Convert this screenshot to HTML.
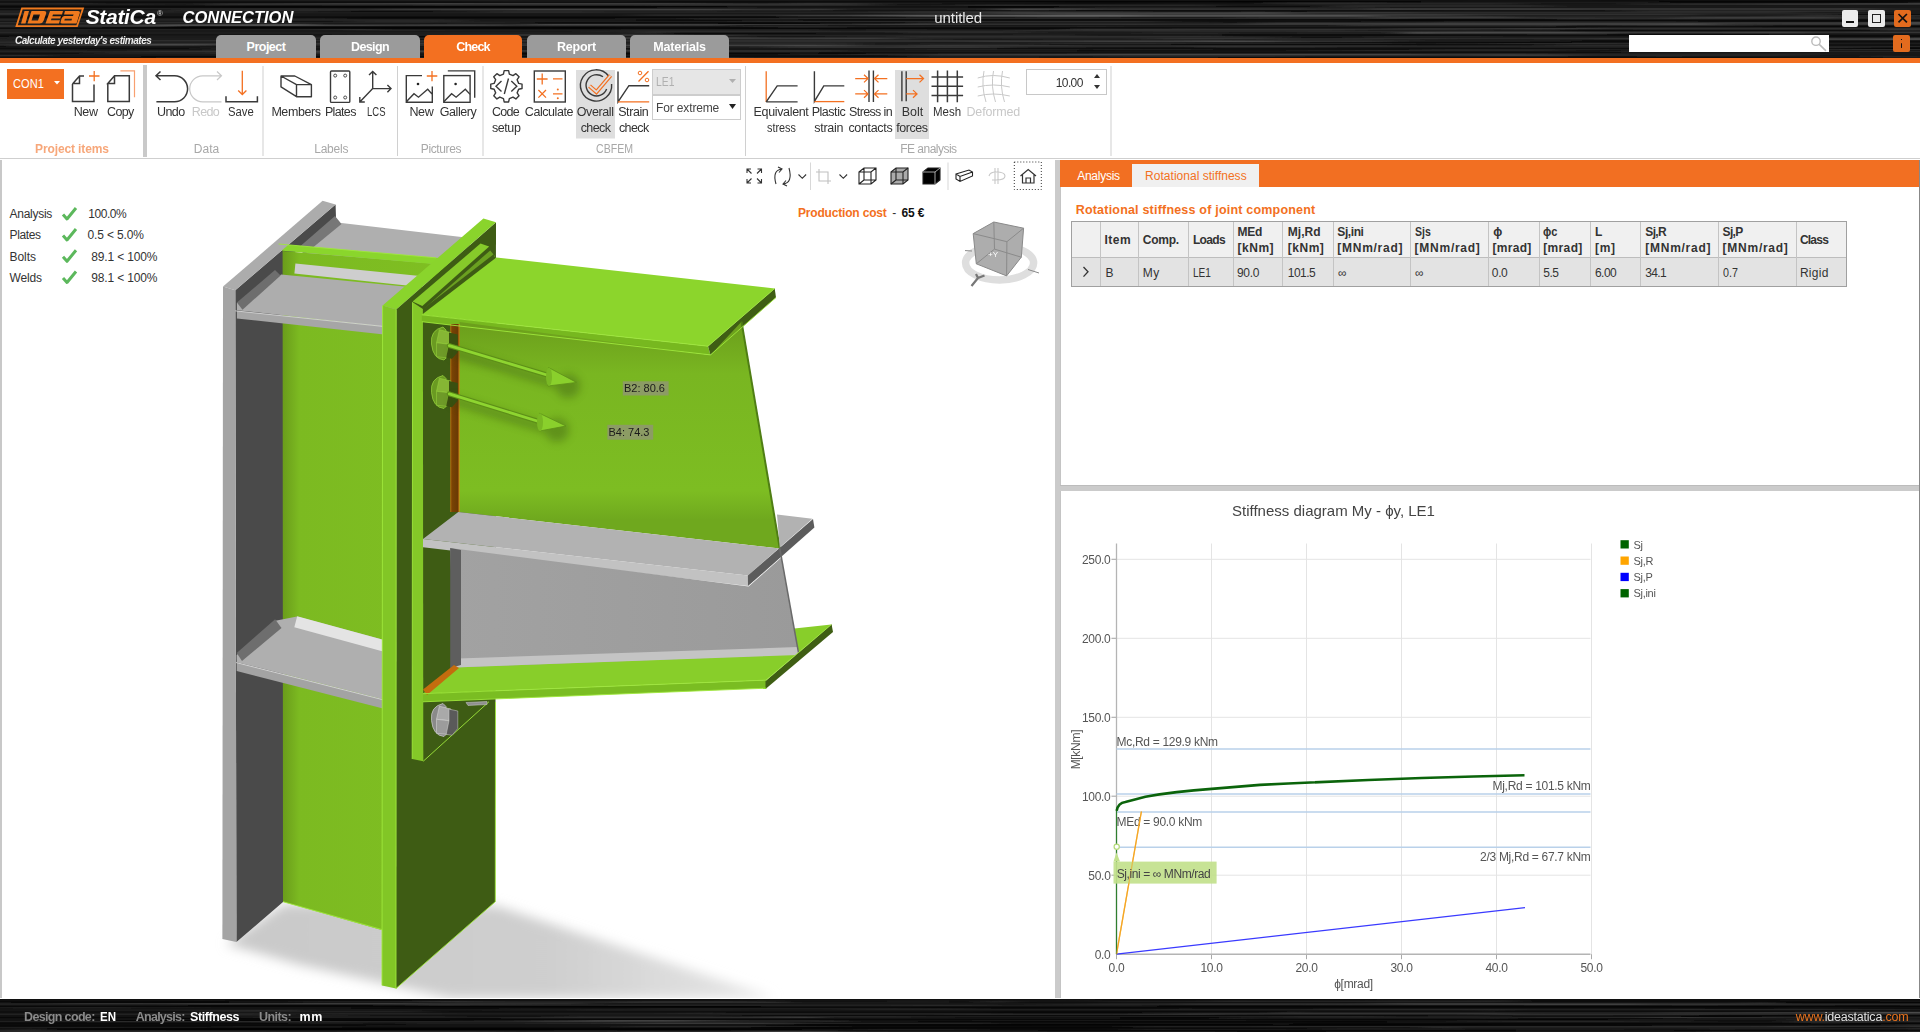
<!DOCTYPE html>
<html><head><meta charset="utf-8">
<style>
*{margin:0;padding:0;box-sizing:border-box}
html,body{width:1920px;height:1032px;overflow:hidden;background:#fff;font-family:"Liberation Sans",sans-serif;position:relative}
.a{position:absolute}
.hdr{left:0;top:0;width:1920px;height:58px;background:#141414;
 background-image:repeating-linear-gradient(180deg,rgba(255,255,255,0.06) 0px,rgba(255,255,255,0) 1px,rgba(0,0,0,0.25) 2px,rgba(255,255,255,0.03) 3px);}
.oline{left:0;top:58px;width:1920px;height:5px;background:#f37021}
.rib{left:0;top:63px;width:1920px;height:96px;background:#fff;border-bottom:1px solid #cfcfcf}
.tab{top:35px;height:23px;border-radius:5px 5px 0 0;background:#9b9b9b;color:#fff;font-weight:bold;font-size:12.5px;text-align:center;line-height:24px}
.ftr{left:0;top:998px;width:1920px;height:34px;background:#0d0d0d;
 background-image:repeating-linear-gradient(180deg,rgba(255,255,255,0.05) 0px,rgba(255,255,255,0) 1px,rgba(0,0,0,0.3) 2px,rgba(255,255,255,0.03) 3px);}
.rl{font-size:12.5px;color:#333;white-space:nowrap}
.gl{font-size:12px;color:#a8a8a8;white-space:nowrap}
.th{font-size:12px;font-weight:bold;color:#333;white-space:nowrap}
.td{font-size:12px;color:#333;white-space:nowrap}
.sep{width:1px;background:#d4d4d4}
</style></head><body>
<!-- HEADER -->
<svg class="a" style="left:0;top:0" width="1920" height="58"><defs><filter id="sf1" filterUnits="userSpaceOnUse" x="-300" y="-10" width="2520" height="78"><feGaussianBlur stdDeviation="16 0.6"/></filter></defs><rect width="1920" height="58" fill="#171717"/><g filter="url(#sf1)"><rect x="-300" y="6" width="2520" height="2" fill="#000" opacity="0.307"/><rect x="-300" y="8" width="2520" height="2" fill="#fff" opacity="0.027"/><rect x="-300" y="10" width="2520" height="2" fill="#000" opacity="0.167"/><rect x="-300" y="12" width="2520" height="2" fill="#fff" opacity="0.011"/><rect x="-300" y="14" width="2520" height="2" fill="#fff" opacity="0.001"/><rect x="-300" y="16" width="2520" height="2" fill="#000" opacity="0.349"/><rect x="-300" y="18" width="2520" height="2" fill="#fff" opacity="0.026"/><rect x="-300" y="22" width="2520" height="2" fill="#fff" opacity="0.003"/><rect x="-300" y="26" width="2520" height="2" fill="#fff" opacity="0.033"/><rect x="-300" y="28" width="2520" height="2" fill="#fff" opacity="0.049"/><rect x="-300" y="30" width="2520" height="2" fill="#fff" opacity="0.038"/><rect x="-300" y="32" width="2520" height="2" fill="#fff" opacity="0.029"/><rect x="-300" y="34" width="2520" height="2" fill="#fff" opacity="0.016"/><rect x="-300" y="36" width="2520" height="2" fill="#000" opacity="0.266"/><rect x="-300" y="40" width="2520" height="2" fill="#fff" opacity="0.022"/><rect x="-300" y="42" width="2520" height="2" fill="#fff" opacity="0.009"/><rect x="-300" y="44" width="2520" height="2" fill="#000" opacity="0.213"/><rect x="-300" y="48" width="2520" height="2" fill="#000" opacity="0.140"/><rect x="-300" y="50" width="2520" height="2" fill="#000" opacity="0.114"/><rect x="-300" y="52" width="2520" height="2" fill="#000" opacity="0.300"/><rect x="-300" y="56" width="2520" height="2" fill="#000" opacity="0.229"/><rect x="377" y="16.4" width="733" height="2" fill="#fff" opacity="0.037"/><rect x="1076" y="8.5" width="240" height="1.5" fill="#fff" opacity="0.039"/><rect x="1740" y="31.1" width="595" height="1.5" fill="#fff" opacity="0.033"/><rect x="-176" y="55.6" width="462" height="1" fill="#fff" opacity="0.033"/><rect x="-272" y="12.9" width="317" height="2" fill="#fff" opacity="0.096"/><rect x="1894" y="30.7" width="712" height="1.5" fill="#fff" opacity="0.021"/><rect x="789" y="44.9" width="178" height="1.5" fill="#fff" opacity="0.057"/><rect x="1773" y="11.2" width="863" height="1" fill="#fff" opacity="0.027"/><rect x="1142" y="31.7" width="668" height="2" fill="#fff" opacity="0.085"/><rect x="636" y="14.4" width="826" height="1.5" fill="#fff" opacity="0.081"/><rect x="620" y="37.4" width="274" height="2" fill="#fff" opacity="0.075"/><rect x="1239" y="23.5" width="772" height="2" fill="#fff" opacity="0.080"/><rect x="644" y="31.1" width="374" height="2" fill="#fff" opacity="0.069"/><rect x="332" y="2.9" width="169" height="1" fill="#fff" opacity="0.047"/><rect x="1554" y="31.9" width="336" height="2" fill="#fff" opacity="0.026"/><rect x="903" y="32.0" width="326" height="2" fill="#fff" opacity="0.097"/><rect x="1894" y="45.6" width="354" height="1.5" fill="#fff" opacity="0.050"/><rect x="15" y="44.8" width="801" height="1" fill="#fff" opacity="0.083"/><rect x="1153" y="1.7" width="709" height="1" fill="#fff" opacity="0.054"/><rect x="1026" y="15.8" width="894" height="2" fill="#fff" opacity="0.064"/><rect x="361" y="30.0" width="824" height="1" fill="#fff" opacity="0.038"/><rect x="1676" y="3.5" width="433" height="1" fill="#fff" opacity="0.074"/><rect x="347" y="34.5" width="390" height="1.5" fill="#fff" opacity="0.084"/><rect x="1765" y="15.6" width="270" height="1" fill="#fff" opacity="0.054"/><rect x="761" y="46.5" width="565" height="1.5" fill="#fff" opacity="0.063"/><rect x="553" y="39.4" width="820" height="1" fill="#fff" opacity="0.060"/><rect x="727" y="6.3" width="241" height="2" fill="#fff" opacity="0.082"/><rect x="-218" y="0.4" width="737" height="1" fill="#fff" opacity="0.040"/><rect x="1108" y="56.0" width="182" height="1" fill="#fff" opacity="0.042"/><rect x="25" y="20.6" width="778" height="1" fill="#fff" opacity="0.034"/><rect x="1056" y="29.0" width="421" height="1" fill="#fff" opacity="0.070"/><rect x="1043" y="39.7" width="181" height="1" fill="#fff" opacity="0.093"/><rect x="-258" y="10.4" width="608" height="1" fill="#fff" opacity="0.095"/><rect x="1691" y="16.8" width="371" height="1" fill="#fff" opacity="0.086"/><rect x="1013" y="34.4" width="395" height="1" fill="#fff" opacity="0.048"/><rect x="176" y="9.1" width="875" height="1.5" fill="#fff" opacity="0.081"/><rect x="1003" y="12.7" width="854" height="2" fill="#fff" opacity="0.049"/><rect x="1353" y="37.1" width="844" height="1.5" fill="#fff" opacity="0.057"/><rect x="1822" y="37.6" width="629" height="1.5" fill="#fff" opacity="0.050"/><rect x="1545" y="44.1" width="180" height="1.5" fill="#fff" opacity="0.048"/><rect x="1145" y="12.0" width="271" height="1.5" fill="#fff" opacity="0.053"/><rect x="401" y="3.3" width="471" height="1" fill="#fff" opacity="0.067"/><rect x="246" y="23.6" width="386" height="2" fill="#fff" opacity="0.044"/><rect x="585" y="46.7" width="426" height="1.5" fill="#fff" opacity="0.097"/><rect x="1083" y="30.6" width="471" height="2" fill="#fff" opacity="0.035"/><rect x="122" y="25.1" width="730" height="1" fill="#fff" opacity="0.057"/><rect x="1114" y="0.2" width="341" height="2" fill="#fff" opacity="0.023"/><rect x="1864" y="22.3" width="705" height="2" fill="#fff" opacity="0.098"/><rect x="1297" y="49.8" width="258" height="1" fill="#fff" opacity="0.080"/><rect x="730" y="46.3" width="713" height="1" fill="#fff" opacity="0.054"/><rect x="1873" y="39.1" width="749" height="1" fill="#fff" opacity="0.070"/><rect x="1046" y="42.8" width="549" height="1" fill="#fff" opacity="0.088"/><rect x="393" y="44.6" width="678" height="1.5" fill="#fff" opacity="0.059"/><rect x="1455" y="31.1" width="371" height="2" fill="#fff" opacity="0.022"/><rect x="965" y="45.1" width="826" height="1" fill="#fff" opacity="0.025"/><rect x="10" y="44.5" width="845" height="2" fill="#fff" opacity="0.094"/><rect x="-54" y="55.3" width="770" height="1" fill="#fff" opacity="0.086"/><rect x="-225" y="54.8" width="508" height="2" fill="#fff" opacity="0.023"/><rect x="909" y="15.1" width="466" height="2" fill="#fff" opacity="0.072"/><rect x="138" y="49.9" width="701" height="2" fill="#fff" opacity="0.074"/><rect x="-8" y="37.4" width="777" height="1.5" fill="#fff" opacity="0.025"/><rect x="16" y="37.8" width="882" height="1" fill="#fff" opacity="0.068"/><rect x="-199" y="22.0" width="719" height="1.5" fill="#fff" opacity="0.084"/><rect x="9" y="36.3" width="748" height="1.5" fill="#fff" opacity="0.072"/><rect x="938" y="53.6" width="882" height="1" fill="#fff" opacity="0.088"/><rect x="424" y="4.7" width="653" height="2" fill="#fff" opacity="0.023"/><rect x="382" y="9.5" width="781" height="1" fill="#fff" opacity="0.031"/><rect x="995" y="8.0" width="882" height="2" fill="#fff" opacity="0.087"/><rect x="137" y="42.9" width="278" height="2" fill="#fff" opacity="0.063"/><rect x="1769" y="33.8" width="750" height="1" fill="#fff" opacity="0.041"/><rect x="1527" y="34.2" width="689" height="1" fill="#fff" opacity="0.029"/><rect x="-157" y="24.5" width="658" height="1.5" fill="#fff" opacity="0.099"/><rect x="-80" y="43.8" width="336" height="1.5" fill="#fff" opacity="0.070"/><rect x="182" y="24.2" width="569" height="1" fill="#fff" opacity="0.047"/><rect x="1860" y="32.1" width="222" height="1" fill="#fff" opacity="0.079"/><rect x="947" y="8.7" width="628" height="1" fill="#fff" opacity="0.056"/><rect x="1760" y="3.0" width="349" height="2" fill="#fff" opacity="0.036"/><rect x="1195" y="40.2" width="376" height="1.5" fill="#fff" opacity="0.093"/><rect x="-68" y="45.0" width="549" height="1.5" fill="#fff" opacity="0.050"/><rect x="87" y="41.8" width="810" height="1" fill="#fff" opacity="0.022"/><rect x="1427" y="48.9" width="670" height="1" fill="#fff" opacity="0.088"/><rect x="1152" y="38.1" width="787" height="1.5" fill="#fff" opacity="0.096"/><rect x="1754" y="36.1" width="258" height="1.5" fill="#fff" opacity="0.030"/><rect x="906" y="15.6" width="598" height="2" fill="#fff" opacity="0.066"/><rect x="836" y="36.0" width="656" height="1" fill="#fff" opacity="0.068"/><rect x="453" y="22.9" width="265" height="1" fill="#fff" opacity="0.091"/><rect x="918" y="44.8" width="810" height="1.5" fill="#fff" opacity="0.048"/><rect x="1433" y="52.8" width="649" height="1" fill="#fff" opacity="0.042"/><rect x="1054" y="6.6" width="321" height="1.5" fill="#fff" opacity="0.054"/><rect x="246" y="50.5" width="220" height="2" fill="#fff" opacity="0.062"/><rect x="1798" y="14.9" width="301" height="1" fill="#fff" opacity="0.075"/><rect x="1883" y="55.9" width="261" height="2" fill="#fff" opacity="0.046"/><rect x="606" y="44.0" width="428" height="1" fill="#fff" opacity="0.067"/><rect x="-186" y="48.4" width="431" height="1.5" fill="#fff" opacity="0.067"/><rect x="-156" y="41.9" width="246" height="1" fill="#fff" opacity="0.029"/><rect x="1622" y="24.8" width="416" height="1" fill="#fff" opacity="0.092"/><rect x="354" y="20.7" width="801" height="1.5" fill="#fff" opacity="0.093"/><rect x="156" y="57.0" width="574" height="1.5" fill="#fff" opacity="0.092"/><rect x="327" y="42.5" width="528" height="2" fill="#fff" opacity="0.083"/><rect x="1572" y="41.6" width="768" height="2" fill="#fff" opacity="0.052"/><rect x="-20" y="37.2" width="160" height="1.5" fill="#fff" opacity="0.093"/><rect x="675" y="48.4" width="322" height="1" fill="#fff" opacity="0.073"/><rect x="-216" y="10.9" width="809" height="2" fill="#fff" opacity="0.036"/><rect x="779" y="17.6" width="816" height="1" fill="#fff" opacity="0.085"/><rect x="860" y="14.6" width="279" height="2" fill="#fff" opacity="0.099"/><rect x="146" y="24.0" width="682" height="1.5" fill="#fff" opacity="0.098"/><rect x="-32" y="49.5" width="702" height="1.5" fill="#fff" opacity="0.034"/><rect x="200" y="47.4" width="330" height="2" fill="#fff" opacity="0.075"/><rect x="621" y="29.3" width="873" height="1.5" fill="#fff" opacity="0.035"/><rect x="-207" y="52.0" width="555" height="1" fill="#fff" opacity="0.026"/><rect x="102" y="1.1" width="179" height="2" fill="#fff" opacity="0.022"/><rect x="424" y="23.4" width="513" height="2" fill="#fff" opacity="0.081"/><rect x="197" y="50.5" width="195" height="1" fill="#fff" opacity="0.020"/><rect x="-59" y="3.4" width="899" height="1" fill="#fff" opacity="0.088"/><rect x="677" y="39.6" width="350" height="1.5" fill="#fff" opacity="0.061"/><rect x="-198" y="46.2" width="184" height="2" fill="#fff" opacity="0.034"/><rect x="1527" y="18.3" width="507" height="1" fill="#fff" opacity="0.066"/><rect x="1050" y="13.8" width="647" height="1.5" fill="#fff" opacity="0.080"/><rect x="918" y="54.5" width="650" height="2" fill="#fff" opacity="0.088"/><rect x="782" y="46.7" width="216" height="1.5" fill="#fff" opacity="0.087"/><rect x="399" y="40.0" width="881" height="2" fill="#fff" opacity="0.080"/><rect x="1374" y="16.7" width="466" height="2" fill="#fff" opacity="0.092"/><rect x="1631" y="3.1" width="448" height="2" fill="#fff" opacity="0.050"/><rect x="1771" y="23.2" width="585" height="2" fill="#fff" opacity="0.033"/><rect x="1241" y="11.5" width="556" height="1.5" fill="#fff" opacity="0.065"/><rect x="292" y="3.0" width="441" height="1" fill="#fff" opacity="0.062"/><rect x="202" y="49.4" width="406" height="1" fill="#fff" opacity="0.063"/><rect x="1267" y="21.9" width="884" height="2" fill="#fff" opacity="0.041"/><rect x="456" y="9.4" width="795" height="2" fill="#fff" opacity="0.033"/><rect x="1341" y="51.4" width="868" height="1.5" fill="#fff" opacity="0.033"/><rect x="-246" y="41.5" width="294" height="2" fill="#fff" opacity="0.054"/><rect x="1723" y="32.5" width="260" height="1" fill="#fff" opacity="0.066"/><rect x="1297" y="31.7" width="291" height="2" fill="#fff" opacity="0.085"/><rect x="903" y="25.7" width="206" height="1.5" fill="#fff" opacity="0.048"/><rect x="938" y="45.3" width="464" height="1" fill="#fff" opacity="0.081"/><rect x="1834" y="48.8" width="660" height="1.5" fill="#fff" opacity="0.090"/><rect x="485" y="11.1" width="653" height="1.5" fill="#fff" opacity="0.091"/><rect x="145" y="35.4" width="274" height="1" fill="#fff" opacity="0.097"/><rect x="1840" y="2.9" width="209" height="1" fill="#fff" opacity="0.065"/><rect x="869" y="11.1" width="408" height="1.5" fill="#fff" opacity="0.068"/><rect x="511" y="6.6" width="247" height="1" fill="#fff" opacity="0.095"/><rect x="380" y="8.6" width="354" height="1.5" fill="#fff" opacity="0.077"/><rect x="225" y="51.8" width="594" height="2" fill="#fff" opacity="0.055"/><rect x="816" y="32.6" width="602" height="1" fill="#fff" opacity="0.074"/><rect x="1084" y="40.7" width="446" height="1.5" fill="#fff" opacity="0.045"/><rect x="571" y="49.4" width="506" height="2" fill="#fff" opacity="0.075"/><rect x="1333" y="5.2" width="216" height="1.5" fill="#fff" opacity="0.089"/><rect x="1634" y="10.5" width="246" height="1.5" fill="#fff" opacity="0.078"/><rect x="1717" y="22.2" width="577" height="2" fill="#fff" opacity="0.048"/><rect x="1255" y="21.8" width="721" height="2" fill="#fff" opacity="0.051"/><rect x="1817" y="36.8" width="439" height="1" fill="#fff" opacity="0.029"/><rect x="14" y="42.6" width="415" height="1" fill="#fff" opacity="0.051"/><rect x="852" y="23.4" width="874" height="2" fill="#fff" opacity="0.100"/><rect x="1489" y="42.8" width="678" height="1" fill="#fff" opacity="0.057"/><rect x="955" y="4.6" width="261" height="2" fill="#fff" opacity="0.067"/><rect x="1361" y="20.6" width="326" height="1.5" fill="#fff" opacity="0.088"/><rect x="1503" y="28.3" width="462" height="1.5" fill="#fff" opacity="0.079"/><rect x="1179" y="49.5" width="421" height="1" fill="#fff" opacity="0.026"/><rect x="1665" y="23.5" width="662" height="1.5" fill="#fff" opacity="0.064"/><rect x="1283" y="2.5" width="235" height="2" fill="#fff" opacity="0.077"/><rect x="1421" y="1.0" width="238" height="2" fill="#fff" opacity="0.078"/><rect x="984" y="11.9" width="297" height="2" fill="#fff" opacity="0.063"/><rect x="1652" y="55.8" width="244" height="1" fill="#fff" opacity="0.087"/><rect x="1008" y="21.3" width="325" height="1.5" fill="#fff" opacity="0.021"/><rect x="1482" y="54.8" width="317" height="1" fill="#fff" opacity="0.072"/><rect x="866" y="29.4" width="484" height="2" fill="#fff" opacity="0.072"/><rect x="813" y="37.7" width="451" height="1.5" fill="#fff" opacity="0.044"/><rect x="1542" y="38.7" width="405" height="2" fill="#fff" opacity="0.024"/><rect x="498" y="2.8" width="433" height="1.5" fill="#fff" opacity="0.037"/><rect x="102" y="8.1" width="228" height="2" fill="#fff" opacity="0.041"/><rect x="1395" y="28.0" width="196" height="1" fill="#fff" opacity="0.086"/><rect x="787" y="15.0" width="586" height="1.5" fill="#fff" opacity="0.098"/><rect x="1532" y="38.7" width="782" height="1" fill="#fff" opacity="0.075"/><rect x="920" y="43.2" width="487" height="2" fill="#fff" opacity="0.026"/><rect x="1078" y="53.5" width="459" height="1" fill="#fff" opacity="0.063"/><rect x="109" y="26.2" width="738" height="1" fill="#fff" opacity="0.077"/><rect x="-286" y="26.8" width="388" height="1" fill="#fff" opacity="0.059"/><rect x="1883" y="20.3" width="701" height="1" fill="#fff" opacity="0.043"/><rect x="901" y="13.2" width="399" height="1" fill="#fff" opacity="0.079"/><rect x="212" y="3.6" width="659" height="2" fill="#fff" opacity="0.098"/><rect x="1594" y="38.2" width="450" height="2" fill="#fff" opacity="0.056"/><rect x="211" y="2.6" width="888" height="1" fill="#fff" opacity="0.047"/><rect x="430" y="56.8" width="788" height="1.5" fill="#fff" opacity="0.045"/><rect x="-233" y="50.8" width="758" height="1.5" fill="#fff" opacity="0.068"/><rect x="974" y="41.0" width="336" height="1.5" fill="#fff" opacity="0.040"/><rect x="1446" y="45.7" width="455" height="1.5" fill="#fff" opacity="0.039"/><rect x="318" y="28.9" width="609" height="1" fill="#fff" opacity="0.046"/><rect x="615" y="18.3" width="325" height="1" fill="#fff" opacity="0.037"/><rect x="1520" y="46.8" width="813" height="1" fill="#fff" opacity="0.059"/><rect x="1609" y="9.6" width="599" height="1.5" fill="#fff" opacity="0.029"/><rect x="69" y="39.4" width="292" height="1.5" fill="#fff" opacity="0.085"/><rect x="1621" y="50.4" width="427" height="2" fill="#fff" opacity="0.066"/><rect x="1386" y="23.5" width="516" height="1.5" fill="#fff" opacity="0.045"/><rect x="-149" y="32.0" width="194" height="1" fill="#fff" opacity="0.049"/><rect x="1888" y="21.3" width="692" height="1" fill="#fff" opacity="0.093"/><rect x="705" y="42.8" width="698" height="1.5" fill="#fff" opacity="0.042"/><rect x="1023" y="53.8" width="563" height="2" fill="#fff" opacity="0.027"/><rect x="76" y="24.5" width="363" height="1" fill="#fff" opacity="0.033"/><rect x="473" y="33.9" width="602" height="2" fill="#fff" opacity="0.060"/><rect x="580" y="36.3" width="701" height="2" fill="#fff" opacity="0.086"/><rect x="916" y="48.9" width="286" height="1" fill="#fff" opacity="0.085"/><rect x="322" y="5.5" width="490" height="1" fill="#fff" opacity="0.033"/><rect x="-296" y="26.3" width="450" height="1" fill="#fff" opacity="0.075"/><rect x="226" y="2.9" width="237" height="1.5" fill="#fff" opacity="0.029"/><rect x="1347" y="0.9" width="591" height="2" fill="#fff" opacity="0.032"/><rect x="1584" y="42.2" width="890" height="2" fill="#fff" opacity="0.041"/><rect x="789" y="53.7" width="629" height="1" fill="#fff" opacity="0.097"/><rect x="-160" y="50.0" width="247" height="2" fill="#fff" opacity="0.042"/><rect x="63" y="43.8" width="389" height="1.5" fill="#fff" opacity="0.067"/><rect x="-122" y="38.7" width="157" height="2" fill="#fff" opacity="0.043"/><rect x="1119" y="7.6" width="165" height="1" fill="#fff" opacity="0.029"/><rect x="-43" y="19.3" width="502" height="1.5" fill="#fff" opacity="0.072"/><rect x="1373" y="35.4" width="390" height="1.5" fill="#fff" opacity="0.049"/><rect x="3" y="40.8" width="309" height="1" fill="#fff" opacity="0.048"/><rect x="153" y="24.8" width="224" height="1.5" fill="#fff" opacity="0.070"/><rect x="886" y="46.3" width="633" height="1.5" fill="#fff" opacity="0.049"/><rect x="1324" y="6.2" width="668" height="1.5" fill="#fff" opacity="0.045"/><rect x="1267" y="38.9" width="273" height="1.5" fill="#fff" opacity="0.049"/><rect x="-272" y="36.7" width="676" height="2" fill="#fff" opacity="0.050"/><rect x="94" y="52.6" width="283" height="2" fill="#fff" opacity="0.070"/><rect x="718" y="27.1" width="197" height="2" fill="#000" opacity="0.193"/><rect x="1762" y="25.2" width="522" height="2" fill="#000" opacity="0.417"/><rect x="-106" y="17.3" width="736" height="1" fill="#000" opacity="0.135"/><rect x="1403" y="40.6" width="590" height="1" fill="#000" opacity="0.351"/><rect x="1222" y="34.6" width="850" height="2" fill="#000" opacity="0.384"/><rect x="421" y="35.0" width="174" height="1" fill="#000" opacity="0.125"/><rect x="-19" y="48.2" width="372" height="2" fill="#000" opacity="0.313"/><rect x="36" y="55.0" width="732" height="1" fill="#000" opacity="0.141"/><rect x="1423" y="39.8" width="231" height="1" fill="#000" opacity="0.169"/><rect x="820" y="38.6" width="182" height="1" fill="#000" opacity="0.106"/><rect x="1487" y="42.3" width="438" height="1" fill="#000" opacity="0.379"/><rect x="1134" y="47.7" width="634" height="2" fill="#000" opacity="0.189"/><rect x="80" y="1.8" width="711" height="2" fill="#000" opacity="0.273"/><rect x="-244" y="27.0" width="845" height="2" fill="#000" opacity="0.432"/><rect x="842" y="49.3" width="518" height="2" fill="#000" opacity="0.152"/><rect x="1086" y="47.1" width="399" height="1" fill="#000" opacity="0.215"/><rect x="1607" y="33.4" width="768" height="2" fill="#000" opacity="0.415"/><rect x="601" y="43.5" width="836" height="1" fill="#000" opacity="0.432"/><rect x="-294" y="1.5" width="780" height="1" fill="#000" opacity="0.344"/><rect x="1052" y="1.5" width="215" height="2" fill="#000" opacity="0.401"/><rect x="914" y="26.5" width="673" height="2" fill="#000" opacity="0.274"/><rect x="853" y="0.3" width="811" height="1" fill="#000" opacity="0.127"/><rect x="221" y="5.9" width="874" height="2" fill="#000" opacity="0.437"/><rect x="992" y="0.9" width="507" height="1" fill="#000" opacity="0.285"/><rect x="964" y="9.6" width="204" height="1" fill="#000" opacity="0.139"/><rect x="1376" y="2.2" width="529" height="1" fill="#000" opacity="0.402"/><rect x="1039" y="56.8" width="734" height="2" fill="#000" opacity="0.302"/><rect x="651" y="31.8" width="766" height="2" fill="#000" opacity="0.403"/><rect x="72" y="5.6" width="585" height="2" fill="#000" opacity="0.370"/><rect x="-295" y="37.7" width="749" height="1" fill="#000" opacity="0.144"/><rect x="185" y="11.2" width="248" height="1" fill="#000" opacity="0.213"/><rect x="363" y="28.0" width="707" height="2" fill="#000" opacity="0.340"/><rect x="1860" y="47.0" width="680" height="2" fill="#000" opacity="0.342"/><rect x="557" y="19.8" width="871" height="1" fill="#000" opacity="0.145"/><rect x="636" y="19.3" width="621" height="2" fill="#000" opacity="0.217"/><rect x="616" y="39.8" width="828" height="1" fill="#000" opacity="0.304"/><rect x="1376" y="41.0" width="443" height="2" fill="#000" opacity="0.284"/><rect x="620" y="48.9" width="488" height="2" fill="#000" opacity="0.262"/><rect x="720" y="25.5" width="367" height="2" fill="#000" opacity="0.123"/><rect x="-106" y="8.9" width="429" height="1" fill="#000" opacity="0.240"/><rect x="1228" y="52.0" width="848" height="1" fill="#000" opacity="0.128"/><rect x="1834" y="0.1" width="406" height="1" fill="#000" opacity="0.445"/><rect x="430" y="29.9" width="593" height="1" fill="#000" opacity="0.250"/><rect x="-257" y="5.4" width="317" height="2" fill="#000" opacity="0.411"/><rect x="1620" y="49.1" width="491" height="2" fill="#000" opacity="0.276"/><rect x="141" y="56.4" width="295" height="2" fill="#000" opacity="0.268"/><rect x="970" y="1.1" width="198" height="2" fill="#000" opacity="0.121"/><rect x="717" y="10.5" width="720" height="1" fill="#000" opacity="0.368"/><rect x="667" y="46.6" width="538" height="2" fill="#000" opacity="0.397"/><rect x="1232" y="0.7" width="690" height="2" fill="#000" opacity="0.401"/><rect x="-180" y="45.4" width="761" height="2" fill="#000" opacity="0.391"/><rect x="1395" y="18.4" width="162" height="2" fill="#000" opacity="0.313"/><rect x="1823" y="14.1" width="156" height="1" fill="#000" opacity="0.448"/><rect x="1697" y="23.1" width="564" height="2" fill="#000" opacity="0.209"/><rect x="942" y="38.7" width="708" height="1" fill="#000" opacity="0.297"/><rect x="352" y="17.2" width="889" height="1" fill="#000" opacity="0.350"/><rect x="1242" y="19.3" width="285" height="1" fill="#000" opacity="0.274"/><rect x="430" y="22.8" width="391" height="1" fill="#000" opacity="0.427"/><rect x="1074" y="8.1" width="309" height="2" fill="#000" opacity="0.249"/><rect x="74" y="26.6" width="704" height="2" fill="#000" opacity="0.133"/><rect x="714" y="25.0" width="643" height="1" fill="#000" opacity="0.334"/><rect x="819" y="29.3" width="814" height="2" fill="#000" opacity="0.240"/><rect x="1171" y="42.6" width="331" height="2" fill="#000" opacity="0.202"/><rect x="32" y="55.0" width="860" height="2" fill="#000" opacity="0.246"/><rect x="-175" y="50.7" width="253" height="1" fill="#000" opacity="0.242"/><rect x="142" y="4.1" width="851" height="1" fill="#000" opacity="0.113"/><rect x="-44" y="48.5" width="873" height="1" fill="#000" opacity="0.276"/><rect x="1196" y="47.6" width="497" height="1" fill="#000" opacity="0.173"/><rect x="664" y="33.2" width="750" height="2" fill="#000" opacity="0.312"/><rect x="259" y="48.0" width="283" height="2" fill="#000" opacity="0.180"/><rect x="538" y="22.2" width="385" height="2" fill="#000" opacity="0.303"/><rect x="798" y="19.0" width="721" height="1" fill="#000" opacity="0.265"/><rect x="168" y="25.9" width="580" height="2" fill="#000" opacity="0.422"/><rect x="-126" y="9.3" width="643" height="1" fill="#000" opacity="0.119"/><rect x="1361" y="19.7" width="743" height="2" fill="#000" opacity="0.311"/><rect x="1204" y="20.5" width="240" height="2" fill="#000" opacity="0.255"/><rect x="-161" y="36.4" width="741" height="2" fill="#000" opacity="0.132"/><rect x="1438" y="38.6" width="353" height="2" fill="#000" opacity="0.207"/><rect x="1845" y="19.6" width="254" height="1" fill="#000" opacity="0.324"/><rect x="1556" y="25.2" width="413" height="2" fill="#000" opacity="0.339"/><rect x="74" y="53.8" width="601" height="1" fill="#000" opacity="0.162"/><rect x="822" y="8.8" width="189" height="2" fill="#000" opacity="0.392"/><rect x="-47" y="50.2" width="567" height="1" fill="#000" opacity="0.258"/><rect x="1045" y="10.5" width="264" height="2" fill="#000" opacity="0.131"/><rect x="1598" y="0.1" width="403" height="2" fill="#000" opacity="0.258"/><rect x="477" y="52.5" width="389" height="2" fill="#000" opacity="0.442"/><rect x="336" y="17.3" width="358" height="2" fill="#000" opacity="0.285"/><rect x="1057" y="31.9" width="345" height="1" fill="#000" opacity="0.324"/><rect x="-8" y="55.9" width="533" height="2" fill="#000" opacity="0.156"/><rect x="246" y="21.1" width="558" height="2" fill="#000" opacity="0.193"/><rect x="159" y="26.4" width="457" height="2" fill="#000" opacity="0.411"/><rect x="456" y="20.6" width="286" height="1" fill="#000" opacity="0.424"/><rect x="693" y="2.6" width="450" height="1" fill="#000" opacity="0.309"/><rect x="687" y="23.4" width="193" height="1" fill="#000" opacity="0.185"/><rect x="-4" y="39.0" width="460" height="1" fill="#000" opacity="0.165"/><rect x="542" y="6.1" width="793" height="1" fill="#000" opacity="0.248"/><rect x="1834" y="47.8" width="627" height="1" fill="#000" opacity="0.403"/><rect x="940" y="45.1" width="620" height="1" fill="#000" opacity="0.128"/><rect x="1673" y="55.8" width="205" height="1" fill="#000" opacity="0.313"/><rect x="1560" y="29.2" width="331" height="2" fill="#000" opacity="0.380"/><rect x="641" y="1.0" width="662" height="1" fill="#000" opacity="0.419"/><rect x="560" y="27.7" width="612" height="1" fill="#000" opacity="0.391"/><rect x="1022" y="1.0" width="861" height="1" fill="#000" opacity="0.332"/><rect x="-297" y="37.0" width="542" height="2" fill="#000" opacity="0.254"/><rect x="1385" y="19.6" width="488" height="2" fill="#000" opacity="0.305"/><rect x="422" y="41.5" width="237" height="1" fill="#000" opacity="0.174"/><rect x="1525" y="17.5" width="153" height="1" fill="#000" opacity="0.346"/><rect x="1707" y="41.7" width="681" height="2" fill="#000" opacity="0.407"/><rect x="206" y="44.1" width="281" height="2" fill="#000" opacity="0.307"/><rect x="1264" y="41.3" width="771" height="2" fill="#000" opacity="0.124"/><rect x="1759" y="36.9" width="150" height="2" fill="#000" opacity="0.216"/><rect x="1890" y="30.9" width="701" height="1" fill="#000" opacity="0.140"/><rect x="328" y="36.3" width="579" height="1" fill="#000" opacity="0.405"/><rect x="-126" y="19.7" width="613" height="1" fill="#000" opacity="0.120"/><rect x="1146" y="24.0" width="721" height="1" fill="#000" opacity="0.113"/><rect x="319" y="11.2" width="585" height="1" fill="#000" opacity="0.215"/><rect x="-196" y="34.7" width="653" height="2" fill="#000" opacity="0.372"/><rect x="1756" y="18.6" width="152" height="2" fill="#000" opacity="0.121"/><rect x="300" y="23.4" width="244" height="2" fill="#000" opacity="0.384"/><rect x="64" y="30.5" width="532" height="1" fill="#000" opacity="0.217"/></g></svg>
<div id="t2" class="a oline"></div>
<div id="t3" class="a tab" style="left:216.0px;width:100px;letter-spacing:-0.50px">Project</div>
<div id="t4" class="a tab" style="left:320.0px;width:100px;letter-spacing:-0.62px">Design</div>
<div id="t5" class="a tab" style="left:424.0px;width:98px;background:#f37021;letter-spacing:-0.80px">Check</div>
<div id="t6" class="a tab" style="left:527.0px;width:99px;letter-spacing:-0.24px">Report</div>
<div id="t7" class="a tab" style="left:630.0px;width:99px;letter-spacing:-0.18px">Materials</div>


<!-- HEADER CONTENT -->
<svg class="a" style="left:0;top:0" width="320" height="56" viewBox="0 0 320 56">
 <polygon points="22,8.5 83,8.5 77,26.2 16.5,26.2" fill="none" stroke="#f07a1e" stroke-width="1.8"/>
 <polygon points="24.5,11 29,11 25.5,23.5 21,23.5" fill="#f07a1e"/>
 <path d="M31.5,11 L44,11 Q47,11 46,14 L43.5,21 Q42.5,23.5 39.5,23.5 L27.5,23.5 Z M33.5,14.5 L31.5,20.5 L38,20.5 L40,14.5 Z" fill="#f07a1e" fill-rule="evenodd"/>
 <path d="M50,11 L63,11 L62,14.5 L53,14.5 L52.3,16.3 L61,16.3 L60.2,18.5 L51.5,18.5 L50.9,20.3 L60,20.3 L58.9,23.5 L45.5,23.5 Z" fill="#f07a1e"/>
 <path d="M65,11 L78,11 Q80.5,11 79.7,13.5 L76.5,23.5 L62,23.5 Q60,23.5 60.8,21 L61.8,18 Q62.6,16 64.5,16 L73,16 L73.6,14.5 L64,14.5 Z M64.8,18.8 L64.3,20.5 L71.5,20.5 L72,18.8 Z" fill="#f07a1e" fill-rule="evenodd"/>
</svg>
<div id="t8" class="a" style="left:85.7px;top:5px;font-size:21px;font-weight:bold;font-style:italic;color:#fff;letter-spacing:-0.33px">StatiCa</div>
<div id="t9" class="a" style="left:157px;top:9px;font-size:8px;color:#ddd">&#174;</div>
<div id="t10" class="a" style="left:182.5px;top:7.5px;font-size:16.5px;font-weight:bold;font-style:italic;color:#fff;letter-spacing:-0.01px">CONNECTION</div>
<div id="t11" class="a" style="left:14.9px;top:35px;font-size:10px;font-weight:bold;font-style:italic;color:#eee;letter-spacing:-0.46px">Calculate yesterday's estimates</div>
<div id="t12" class="a" style="left:934.2px;top:9px;font-size:15px;color:#e8e8e8;letter-spacing:-0.05px">untitled</div>
<div id="t13" class="a" style="left:1841.5px;top:10px;width:16.5px;height:17px;background:#ececec;border-radius:2px"></div>
<div id="t14" class="a" style="left:1846px;top:21px;width:8px;height:2px;background:#111"></div>
<div id="t15" class="a" style="left:1868px;top:10px;width:16.5px;height:17px;background:#ececec;border-radius:2px"></div>
<div id="t16" class="a" style="left:1872px;top:14px;width:8.5px;height:8.5px;border:1.6px solid #222"></div>
<div id="t17" class="a" style="left:1894px;top:10px;width:17px;height:17px;background:#e26b1e;border-radius:2px"></div>
<svg class="a" style="left:1894px;top:10px" width="17" height="17"><path d="M4.5,4 L12.9,12.4 M12.9,4 L4.5,12.4" stroke="#111" stroke-width="1.7"/></svg>
<div id="t18" class="a" style="left:1893px;top:34.5px;width:17px;height:17px;background:#e26b1e;border-radius:2px"></div>
<div id="t19" class="a" style="left:1900.6px;top:38.5px;width:1.8px;height:1.8px;background:#111"></div>
<div id="t20" class="a" style="left:1900.6px;top:42.5px;width:1.8px;height:5px;background:#111;border-radius:1px"></div>
<div id="t21" class="a" style="left:1628.5px;top:34.5px;width:200px;height:17.5px;background:#fff"></div>
<svg class="a" style="left:1808px;top:35px" width="20" height="17"><circle cx="8" cy="6.2" r="4.2" fill="none" stroke="#bbb" stroke-width="1.4"/><path d="M11,9.2 L18,15.8" stroke="#bbb" stroke-width="1.6"/></svg>

<!-- RIBBON -->
<div id="t22" class="a rib"></div>


<!-- RIBBON CONTENT -->
<div id="t23" class="a" style="left:7px;top:69px;width:57px;height:30px;background:#f37021"></div>
<div id="t24" class="a" style="left:12.6px;top:77.0px;color:#fff;font-size:12.5px;transform:scaleX(0.887);transform-origin:0 0">CON1</div>
<svg class="a" style="left:54px;top:81px" width="7" height="5"><polygon points="0,0 6,0 3,3.5" fill="#fff"/></svg>
<svg class="a" style="left:0;top:63px" width="1120" height="96" viewBox="0 63 1120 96" fill="none" stroke-linecap="butt">
 <!-- New -->
 <path d="M72.5,84 L72.5,101.5 L94,101.5 L94,84.5 M72.5,84 L79.5,76 L84,76 M79.5,76 L79.5,83.5 L72.5,83.5" stroke="#3a3a3a" stroke-width="1.5"/>
 <path d="M94.2,71 L94.2,81.2 M89,76 L99.5,76" stroke="#f37021" stroke-width="1.3"/>
 <!-- Copy -->
 <path d="M107.8,84 L107.8,101.5 L129.3,101.5 L129.3,75.8 L114.5,75.8 L107.8,83.5 L114.5,83.5 L114.5,75.8" stroke="#3a3a3a" stroke-width="1.5"/>
 <path d="M120.4,70.8 L134.5,70.8 L134.5,97.3" stroke="#f8a070" stroke-width="1.2"/>
 <!-- Undo -->
 <path d="M156,75.8 L174.6,75.8 A13,13 0 0 1 174.6,101.8 L156.4,101.8 M160.5,71.5 L156,75.8 L160.5,80" stroke="#3a3a3a" stroke-width="1.5"/>
 <!-- Redo -->
 <path d="M221.5,75.8 L202.7,75.8 A13,13 0 0 0 202.7,101.8 L221.5,101.8 M217,71.5 L221.5,75.8 L217,80" stroke="#c8c8c8" stroke-width="1.2"/>
 <!-- Save -->
 <path d="M242.3,70.8 L242.3,94.5 M238.2,90.5 L242.3,94.5 L246.4,90.5" stroke="#f37021" stroke-width="1.3"/>
 <path d="M226,96.3 L226,101.8 L257.4,101.8 L257.4,96.3" stroke="#3a3a3a" stroke-width="1.5"/>
 <!-- Members -->
 <path d="M281,76 L294.8,76 L311.4,84.6 L296.5,84.6 Z M296.5,84.6 L296.5,96.7 L311.4,96.7 L311.4,84.6 M281,76 L281,86.9 L296.5,96.7" stroke="#3a3a3a" stroke-width="1.4" stroke-linejoin="round"/>
 <!-- Plates -->
 <rect x="330.5" y="71" width="19.3" height="31.4" rx="1" stroke="#3a3a3a" stroke-width="1.4"/>
 <circle cx="335.2" cy="75.6" r="1.5" stroke="#3a3a3a" stroke-width="0.9"/><circle cx="345.2" cy="75.6" r="1.5" stroke="#3a3a3a" stroke-width="0.9"/>
 <circle cx="335.2" cy="97.5" r="1.5" stroke="#3a3a3a" stroke-width="0.9"/><circle cx="345.2" cy="97.5" r="1.5" stroke="#3a3a3a" stroke-width="0.9"/>
 <!-- LCS -->
 <path d="M372.7,71.4 L372.7,88.6 L391,88.6 M372.7,88.6 L359.8,102 M369,75 L372.7,71.4 L376.4,75 M387.4,84.9 L391,88.6 L387.4,92.3 M359.8,97 L359.8,102 L364.8,102" stroke="#3a3a3a" stroke-width="1.4"/>
 <!-- New picture -->
 <path d="M422,75.6 L406.3,75.6 L406.3,102.3 L432.3,102.3 L432.3,86.5 M406.3,101.8 L414,93.8 L418.5,97.2 L427.7,89.2 L432.3,94.4" stroke="#3a3a3a" stroke-width="1.4"/>
 <circle cx="418" cy="84" r="1.3" fill="#222"/>
 <path d="M432,71 L432,81.2 M426.8,76 L437.3,76" stroke="#f37021" stroke-width="1.3"/>
 <!-- Gallery -->
 <rect x="443.8" y="75.6" width="26.3" height="26.7" stroke="#3a3a3a" stroke-width="1.4"/>
 <path d="M443.8,101.8 L451.6,93.8 L456.1,97.2 L465.3,89.2 L470.1,94.4 M447.8,70.9 L474.7,70.9 L474.7,97.8" stroke="#3a3a3a" stroke-width="1.4"/>
 <circle cx="455.6" cy="84" r="1.3" fill="#222"/>
 <!-- Code setup gear -->
 <path d="M504.17,70.66 L508.63,70.66 L509.34,74.05 L512.98,75.56 L515.89,73.66 L519.04,76.81 L517.14,79.72 L518.65,83.36 L522.04,84.07 L522.04,88.53 L518.65,89.24 L517.14,92.88 L519.04,95.79 L515.89,98.94 L512.98,97.04 L509.34,98.55 L508.63,101.94 L504.17,101.94 L503.46,98.55 L499.82,97.04 L496.91,98.94 L493.76,95.79 L495.66,92.88 L494.15,89.24 L490.76,88.53 L490.76,84.07 L494.15,83.36 L495.66,79.72 L493.76,76.81 L496.91,73.66 L499.82,75.56 L503.46,74.05 Z" stroke-linejoin="round" stroke="#3a3a3a" stroke-width="1.4"/>
 <path d="M501.5,81 L496,86.3 L501.5,91.5 M511.3,81 L516.8,86.3 L511.3,91.5 M508.5,78.5 L504.3,94" stroke="#3a3a3a" stroke-width="1.4"/>
 <!-- Calculate -->
 <rect x="534.3" y="71" width="31" height="31" stroke="#3a3a3a" stroke-width="1.4"/>
 <path d="M542.2,73.6 L542.2,84.4 M536.8,79 L547.6,79 M553,78.9 L562.5,78.9 M538.4,90 L546,97.6 M546,90 L538.4,97.6 M553,93.8 L562.5,93.8" stroke="#f37021" stroke-width="1.3"/>
 <circle cx="557.8" cy="89.4" r="1" fill="#f37021"/><circle cx="557.8" cy="98.3" r="1" fill="#f37021"/>
 <!-- Overall check bg -->
 <rect x="576" y="70" width="39" height="68.5" fill="#dedede" stroke="none"/>
 <path d="M608.5,76 A15.6,15.6 0 1 0 611.6,84" stroke="#3a3a3a" stroke-width="1.4"/>
 <path d="M603,76.8 A10.6,10.6 0 1 0 606.6,89" stroke="#3a3a3a" stroke-width="1.4"/>
 <path d="M589.5,86 L596.4,92 L610.5,75.5" stroke="#f37021" stroke-width="4.2" stroke-linejoin="miter"/>
 <path d="M589.5,86 L596.4,92 L610.5,75.5" stroke="#dedede" stroke-width="1.7" stroke-linejoin="miter"/>
 <!-- Strain check -->
 <path d="M618,71.4 L618,101.9 L628.9,85.7 L649.2,85.7" stroke="#3a3a3a" stroke-width="1.4"/>
 <path d="M618,101.9 L649.2,101.9 M638.5,81.5 L648.5,71.2" stroke="#f37021" stroke-width="1.3"/>
 <circle cx="640" cy="73" r="1.8" stroke="#f37021" stroke-width="1"/><circle cx="647" cy="80" r="1.8" stroke="#f37021" stroke-width="1"/>
 <!-- Equivalent stress -->
 <path d="M766.2,71.3 L766.2,101.9" stroke="#f37021" stroke-width="1.3"/>
 <path d="M766.2,101.9 L777.2,85.9 L797.6,85.9 M766.2,101.9 L797.6,101.9" stroke="#3a3a3a" stroke-width="1.4"/>
 <!-- Plastic strain -->
 <path d="M814.4,71.3 L814.4,101.4 L823.8,85.9 L844.3,85.9" stroke="#3a3a3a" stroke-width="1.4"/>
 <path d="M814.4,101.6 L844.3,101.6" stroke="#f37021" stroke-width="1.3"/>
 <!-- Stress in contacts -->
 <path d="M869,70.6 L869,101.9 M873.4,70.6 L873.4,101.9" stroke="#3a3a3a" stroke-width="1.4"/>
 <path d="M855.2,78.6 L868,78.6 M864,74.8 L868,78.6 L864,82.4 M855.2,93.9 L868,93.9 M864,90.1 L868,93.9 L864,97.7 M887.3,78.6 L874.5,78.6 M878.5,74.8 L874.5,78.6 L878.5,82.4 M887.3,93.9 L874.5,93.9 M878.5,90.1 L874.5,93.9 L878.5,97.7" stroke="#f37021" stroke-width="1.3"/>
 <!-- Bolt forces -->
 <rect x="895" y="70" width="34" height="69" fill="#dedede" stroke="none"/>
 <path d="M901.9,71.3 L901.9,101.2 M906.2,71.3 L906.2,101.2" stroke="#3a3a3a" stroke-width="1.4"/>
 <path d="M906.2,78.6 L923.5,78.6 M919.5,74.8 L923.5,78.6 L919.5,82.4 M906.2,93.9 L917,93.9 M913,90.1 L917,93.9 L913,97.7" stroke="#f37021" stroke-width="1.3"/>
 <!-- Mesh -->
 <path d="M937.6,70.6 L937.6,102.2 M947.4,70.6 L947.4,102.2 M957.3,70.6 L957.3,102.2 M931.5,77.1 L963.1,77.1 M931.5,86.2 L963.1,86.2 M931.5,95.4 L963.1,95.4" stroke="#3a3a3a" stroke-width="1.5"/>
 <!-- Deformed -->
 <path d="M984,71 Q981,86 986,102 M993.5,71 Q990.5,86 995.5,102 M1002.5,71 Q999.5,86 1004.5,102 M977.7,78 Q993,73 1009.8,78 M977.7,87 Q993,83 1009.8,87 M977.7,96 Q993,92 1009.8,96" stroke="#c8c8c8" stroke-width="1"/>
 <!-- separators -->
 <rect x="143" y="65" width="4" height="92" fill="#c9c9c9" stroke="none"/>
 <rect x="262.5" y="66" width="1" height="90" fill="#d0d0d0" stroke="none"/>
 <rect x="397" y="66" width="1" height="90" fill="#d0d0d0" stroke="none"/>
 <rect x="482.5" y="66" width="1" height="90" fill="#d0d0d0" stroke="none"/>
 <rect x="745" y="66" width="1" height="90" fill="#d0d0d0" stroke="none"/>
 <rect x="1110.5" y="66" width="1" height="90" fill="#d0d0d0" stroke="none"/>
</svg>
<!-- LE1 dropdowns -->
<div id="t25" class="a" style="left:652px;top:69px;width:89px;height:26px;background:#e6e6e6;border:1px solid #cdcdcd"></div>
<div id="t26" class="a" style="left:655.5px;top:75.0px;color:#b0b0b0;font-size:12px;transform:scaleX(0.861);transform-origin:0 0">LE1</div>
<svg class="a" style="left:729px;top:79px" width="8" height="5"><polygon points="0,0 7,0 3.5,4" fill="#b0b0b0"/></svg>
<div id="t27" class="a" style="left:652px;top:95px;width:89px;height:25px;background:#fff;border:1px solid #cdcdcd"></div>
<div id="t28" class="a" style="left:656.1px;top:101px;font-size:12px;color:#444;letter-spacing:-0.15px">For extreme</div>
<svg class="a" style="left:729px;top:104px" width="8" height="6"><polygon points="0,0 7,0 3.5,5" fill="#222"/></svg>
<!-- spin box -->
<div id="t29" class="a" style="left:1026px;top:69px;width:81px;height:26px;background:#fff;border:1px solid #c8c8c8"></div>
<div id="t30" class="a" style="left:1055.8px;top:76px;font-size:12px;color:#333;letter-spacing:-0.62px">10.00</div>
<svg class="a" style="left:1093px;top:72px" width="9" height="20"><polygon points="1,6 7,6 4,2" fill="#333"/><polygon points="1,13 7,13 4,17" fill="#333"/></svg>
<!-- ribbon labels -->
<div id="t31" class="a rl" style="left:73.7px;top:105px;letter-spacing:-0.36px">New</div>
<div id="t32" class="a rl" style="left:107.0px;top:105px;letter-spacing:-0.63px">Copy</div>
<div id="t33" class="a rl" style="left:156.9px;top:105px;letter-spacing:-0.50px">Undo</div>
<div id="t34" class="a rl" style="left:191.8px;top:105px;color:#c8c8c8;letter-spacing:-0.66px">Redo</div>
<div id="t35" class="a rl" style="left:228.3px;top:105.0px;transform:scaleX(0.905);transform-origin:0 0">Save</div>
<div id="t36" class="a rl" style="left:271.4px;top:105px;letter-spacing:-0.43px">Members</div>
<div id="t37" class="a rl" style="left:324.9px;top:105px;letter-spacing:-0.65px">Plates</div>
<div id="t38" class="a rl" style="left:366.5px;top:105.0px;transform:scaleX(0.760);transform-origin:0 0">LCS</div>
<div id="t39" class="a rl" style="left:409.5px;top:105px;letter-spacing:-0.41px">New</div>
<div id="t40" class="a rl" style="left:439.8px;top:105px;letter-spacing:-0.45px">Gallery</div>
<div id="t41" class="a rl" style="left:491.9px;top:105px;letter-spacing:-0.66px">Code</div>
<div id="t42" class="a rl" style="left:491.9px;top:121px;letter-spacing:-0.40px">setup</div>
<div id="t43" class="a rl" style="left:524.8px;top:105px;letter-spacing:-0.44px">Calculate</div>
<div id="t44" class="a rl" style="left:576.7px;top:105px;letter-spacing:-0.38px">Overall</div>
<div id="t45" class="a rl" style="left:580.7px;top:121px;letter-spacing:-0.61px">check</div>
<div id="t46" class="a rl" style="left:618.2px;top:105px;letter-spacing:-0.41px">Strain</div>
<div id="t47" class="a rl" style="left:618.9px;top:121px;letter-spacing:-0.59px">check</div>
<div id="t48" class="a rl" style="left:753.6px;top:105px;letter-spacing:-0.35px">Equivalent</div>
<div id="t49" class="a rl" style="left:767.2px;top:121.0px;transform:scaleX(0.867);transform-origin:0 0">stress</div>
<div id="t50" class="a rl" style="left:811.7px;top:105px;letter-spacing:-0.47px">Plastic</div>
<div id="t51" class="a rl" style="left:814.3px;top:121px;letter-spacing:-0.30px">strain</div>
<div id="t52" class="a rl" style="left:849.1px;top:105px;letter-spacing:-0.63px">Stress in</div>
<div id="t53" class="a rl" style="left:848.4px;top:121px;letter-spacing:-0.32px">contacts</div>
<div id="t54" class="a rl" style="left:901.8px;top:105px;letter-spacing:-0.02px">Bolt</div>
<div id="t55" class="a rl" style="left:896.3px;top:121px;letter-spacing:-0.47px">forces</div>
<div id="t56" class="a rl" style="left:933.4px;top:105.0px;transform:scaleX(0.919);transform-origin:0 0">Mesh</div>
<div id="t57" class="a rl" style="left:966.5px;top:105px;color:#c8c8c8;letter-spacing:-0.16px">Deformed</div>
<div id="t58" class="a gl" style="left:35.1px;top:142px;color:#f7a77a;font-weight:bold;letter-spacing:-0.13px">Project items</div>
<div id="t59" class="a gl" style="left:193.7px;top:142px;letter-spacing:0.05px">Data</div>
<div id="t60" class="a gl" style="left:314.2px;top:142px;letter-spacing:-0.22px">Labels</div>
<div id="t61" class="a gl" style="left:420.8px;top:142px;letter-spacing:-0.37px">Pictures</div>
<div id="t62" class="a gl" style="left:595.8px;top:142.0px;transform:scaleX(0.882);transform-origin:0 0">CBFEM</div>
<div id="t63" class="a gl" style="left:900.3px;top:142px;letter-spacing:-0.53px">FE analysis</div>

<!-- LEFT VIEWPORT -->
<div id="t64" class="a" style="left:0;top:160px;width:2px;height:838px;background:#c8c8c8"></div>
<div id="t65" class="a" style="left:1055px;top:160px;width:5px;height:838px;background:#cbcbcb"></div>
<div id="t66" class="a" style="left:1919px;top:160px;width:1px;height:838px;background:#888"></div>


<!-- VIEWPORT CONTENT -->
<div id="t210" class="a" style="left:9.5px;top:207px;font-size:12px;color:#333;letter-spacing:-0.27px">Analysis</div>
<div id="t211" class="a" style="left:9.5px;top:228px;font-size:12px;color:#333;letter-spacing:-0.36px">Plates</div>
<div id="t212" class="a" style="left:9.5px;top:249.8px;font-size:12px;color:#333;letter-spacing:-0.03px">Bolts</div>
<div id="t213" class="a" style="left:9.5px;top:270.5px;font-size:12px;color:#333;letter-spacing:-0.14px">Welds</div>
<svg class="a" style="left:60px;top:205px" width="20" height="80">
 <path d="M3,9.5 L7,14 L16,3" fill="none" stroke="#5cb85c" stroke-width="3" stroke-linejoin="round"/>
 <path d="M3,30.5 L7,35 L16,24" fill="none" stroke="#5cb85c" stroke-width="3" stroke-linejoin="round"/>
 <path d="M3,51.8 L7,56.3 L16,45.3" fill="none" stroke="#5cb85c" stroke-width="3" stroke-linejoin="round"/>
 <path d="M3,73 L7,77.5 L16,66.5" fill="none" stroke="#5cb85c" stroke-width="3" stroke-linejoin="round"/>
</svg>
<div id="t68" class="a" style="left:88.3px;top:207px;font-size:12px;color:#333;letter-spacing:-0.48px">100.0%</div>
<div id="t69" class="a" style="left:87.5px;top:228px;font-size:12px;color:#333;letter-spacing:-0.13px">0.5 &lt; 5.0%</div>
<div id="t70" class="a" style="left:91.3px;top:249.8px;font-size:12px;color:#333;letter-spacing:-0.17px">89.1 &lt; 100%</div>
<div id="t71" class="a" style="left:91.3px;top:270.5px;font-size:12px;color:#333;letter-spacing:-0.17px">98.1 &lt; 100%</div>
<div id="t201" class="a" style="left:797.9px;top:206px;font-size:12px;font-weight:bold;color:#f37021;white-space:nowrap;letter-spacing:-0.17px">Production cost</div>
<div id="t202" class="a" style="left:892.3px;top:206px;font-size:12px;color:#333;letter-spacing:0.00px">-</div>
<div id="t203" class="a" style="left:901.6px;top:206px;font-size:12px;font-weight:bold;color:#111;white-space:nowrap;letter-spacing:-0.19px">65 &#8364;</div>
<!-- 3D toolbar -->
<svg class="a" style="left:740px;top:160px" width="310" height="32" viewBox="740 160 310 32" fill="none">
 <path d="M747,173 L747,169 L751,169 M747,169 L751.5,173.5 M761.5,173 L761.5,169 L757.5,169 M761.5,169 L757,173.5 M747,179 L747,183 L751,183 M747,183 L751.5,178.5 M761.5,179 L761.5,183 L757.5,183 M761.5,183 L757,178.5" stroke="#333" stroke-width="1.1"/>
 <path d="M782,169 Q772,170 776,184 M778,167 L782,169 L779,172.5 M783,184 Q793,183 789,168 M787,186 L783,184 L786,180.5" stroke="#333" stroke-width="1.1"/>
 <path d="M798.5,174.5 L802.3,178.3 L806.1,174.5 M839.5,174.5 L843.3,178.3 L847.1,174.5" stroke="#333" stroke-width="1.1"/>
 <rect x="810" y="162.5" width="1" height="27.5" fill="#d8d8d8"/>
 <rect x="947.5" y="162.5" width="1" height="27.5" fill="#d8d8d8"/>
 <path d="M819,169 L819,181 L831,181 M816,172 L828,172 L828,184" stroke="#c0c0c0" stroke-width="1.1"/>
 <path d="M859,172 L864,168 L876,168 L876,180 L871,184 L859,184 Z M859,172 L871,172 L876,168 M871,172 L871,184 M864,168 L864,180 L876,180 M864,180 L859,184" stroke="#222" stroke-width="1.1"/>
 <path d="M891,172 L896,168 L908,168 L908,180 L903,184 L891,184 Z" fill="#aaa" stroke="#222" stroke-width="1.1"/>
 <path d="M891,172 L903,172 L908,168 M903,172 L903,184 M896,168 L896,180 L908,180 M896,180 L891,184" stroke="#222" stroke-width="1.1"/>
 <path d="M923,172 L928,168 L940,168 L940,180 L935,184 L923,184 Z" fill="#000" stroke="#222" stroke-width="1.1"/>
 <path d="M923,172 L935,172 L940,168 M935,172 L935,184" stroke="#ccc" stroke-width="0.8"/>
 <path d="M956,174 L969,170 L972.5,172 L972.5,176 L960,181.5 L956,179 Z M956,174 L960,176.5 L972.5,172 M960,176.5 L960,181.5" stroke="#222" stroke-width="1.1"/>
 <path d="M995,168 L995,184 M998,168 L998,184 M989,176 Q990,172 996,172 Q1005,172 1005,176 Q1005,180 996,180 L992,180" stroke="#c8c8c8" stroke-width="1.1"/>
 <rect x="1014.3" y="162" width="27" height="27.5" stroke="#333" stroke-width="1" stroke-dasharray="1,2"/>
 <path d="M1020.5,176 L1028.2,169.5 L1036,176 M1022.5,174.5 L1022.5,183 L1034,183 L1034,174.5 M1026,183 L1026,178 L1030.5,178 L1030.5,183" stroke="#333" stroke-width="1.2"/>
</svg>

<!-- RIGHT PANEL -->
<div class="a" style="left:1060px;top:187px;width:1px;height:811px;background:#c4c4c4"></div>

<div id="t73" class="a" style="left:1060px;top:160px;width:859px;height:27px;background:#f26f22"></div>
<div id="t74" class="a" style="left:1077.2px;top:169px;font-size:12px;color:#fff;letter-spacing:-0.26px">Analysis</div>
<div id="t75" class="a" style="left:1132px;top:164px;width:127px;height:23px;background:#f0f0f0"></div>
<div id="t76" class="a" style="left:1145.1px;top:169px;font-size:12px;color:#f37021;letter-spacing:0.02px">Rotational stiffness</div>
<div id="t77" class="a" style="left:1075.7px;top:203px;font-size:12.5px;font-weight:bold;color:#f37021;letter-spacing:0.20px">Rotational stiffness of joint component</div>
<div id="t78" class="a" style="left:1071px;top:221px;width:776px;height:66px;background:#f0f0f0;border:1px solid #a0a0a0"></div>
<div id="t79" class="a" style="left:1072px;top:257px;width:774px;height:29px;background:#e3e3e3;border-top:1px solid #bdbdbd"></div>
<div id="t80" class="a" style="left:1100px;top:222px;width:1px;height:64px;background:#c4c4c4"></div>
<div id="t81" class="a" style="left:1138px;top:222px;width:1px;height:64px;background:#c4c4c4"></div>
<div id="t82" class="a" style="left:1188px;top:222px;width:1px;height:64px;background:#c4c4c4"></div>
<div id="t83" class="a" style="left:1233px;top:222px;width:1px;height:64px;background:#c4c4c4"></div>
<div id="t84" class="a" style="left:1282px;top:222px;width:1px;height:64px;background:#c4c4c4"></div>
<div id="t85" class="a" style="left:1333px;top:222px;width:1px;height:64px;background:#c4c4c4"></div>
<div id="t86" class="a" style="left:1410px;top:222px;width:1px;height:64px;background:#c4c4c4"></div>
<div id="t87" class="a" style="left:1488px;top:222px;width:1px;height:64px;background:#c4c4c4"></div>
<div id="t88" class="a" style="left:1539px;top:222px;width:1px;height:64px;background:#c4c4c4"></div>
<div id="t89" class="a" style="left:1590px;top:222px;width:1px;height:64px;background:#c4c4c4"></div>
<div id="t90" class="a" style="left:1640px;top:222px;width:1px;height:64px;background:#c4c4c4"></div>
<div id="t91" class="a" style="left:1718px;top:222px;width:1px;height:64px;background:#c4c4c4"></div>
<div id="t92" class="a" style="left:1796px;top:222px;width:1px;height:64px;background:#c4c4c4"></div>
<div id="t93" class="a th" style="left:1104.5px;top:233.2px;letter-spacing:0.50px">Item</div>
<div id="t94" class="a th" style="left:1142.8px;top:233.2px;letter-spacing:-0.24px">Comp.</div>
<div id="t95" class="a th" style="left:1192.9px;top:233.2px;letter-spacing:-0.66px">Loads</div>
<div id="t96" class="a th" style="left:1237.5px;top:225.2px;letter-spacing:-0.22px">MEd</div>
<div id="t97" class="a th" style="left:1237.5px;top:241.2px;letter-spacing:0.52px">[kNm]</div>
<div id="t98" class="a th" style="left:1287.8px;top:225.2px;letter-spacing:0.01px">Mj,Rd</div>
<div id="t99" class="a th" style="left:1287.8px;top:241.2px;letter-spacing:0.50px">[kNm]</div>
<div id="t100" class="a th" style="left:1337.3px;top:225.2px;letter-spacing:-0.41px">Sj,ini</div>
<div id="t101" class="a th" style="left:1337.3px;top:241.2px;letter-spacing:0.73px">[MNm/rad]</div>
<div id="t102" class="a th" style="left:1414.6px;top:225.2px;transform:scaleX(0.877);transform-origin:0 0">Sjs</div>
<div id="t103" class="a th" style="left:1414.6px;top:241.2px;letter-spacing:0.74px">[MNm/rad]</div>
<div id="t104" class="a th" style="left:1493.3px;top:225.2px">&#981;</div>
<div id="t105" class="a th" style="left:1492.5px;top:241.2px;letter-spacing:0.29px">[mrad]</div>
<div id="t106" class="a th" style="left:1543.3px;top:225.2px;transform:scaleX(0.919);transform-origin:0 0">&#981;c</div>
<div id="t107" class="a th" style="left:1543.3px;top:241.2px;letter-spacing:0.33px">[mrad]</div>
<div id="t108" class="a th" style="left:1595.0px;top:225.2px">L</div>
<div id="t109" class="a th" style="left:1594.9px;top:241.2px;letter-spacing:0.76px">[m]</div>
<div id="t110" class="a th" style="left:1645.3px;top:225.2px;letter-spacing:-0.65px">Sj,R</div>
<div id="t111" class="a th" style="left:1645.3px;top:241.2px;letter-spacing:0.73px">[MNm/rad]</div>
<div id="t112" class="a th" style="left:1722.6px;top:225.2px;letter-spacing:-0.66px">Sj,P</div>
<div id="t113" class="a th" style="left:1722.6px;top:241.2px;letter-spacing:0.74px">[MNm/rad]</div>
<div id="t114" class="a th" style="left:1799.9px;top:233.2px;letter-spacing:-0.76px">Class</div>
<svg class="a" style="left:1082px;top:266px" width="8" height="12"><path d="M1.5,1 L6,5.8 L1.5,10.6" fill="none" stroke="#333" stroke-width="1.3"/></svg>
<div id="t115" class="a td" style="left:1105.4px;top:266.2px">B</div>
<div id="t116" class="a td" style="left:1142.8px;top:266.2px;letter-spacing:0.50px">My</div>
<div id="t117" class="a td" style="left:1192.9px;top:266.2px;transform:scaleX(0.838);transform-origin:0 0">LE1</div>
<div id="t118" class="a td" style="left:1237.0px;top:266.2px;letter-spacing:-0.35px">90.0</div>
<div id="t119" class="a td" style="left:1287.8px;top:266.2px;letter-spacing:-0.51px">101.5</div>
<div id="t120" class="a td" style="left:1337.9px;top:266.2px">&#8734;</div>
<div id="t121" class="a td" style="left:1415.0px;top:266.2px">&#8734;</div>
<div id="t122" class="a td" style="left:1491.8px;top:266.2px;letter-spacing:-0.34px">0.0</div>
<div id="t123" class="a td" style="left:1543.3px;top:266.2px;letter-spacing:-0.54px">5.5</div>
<div id="t124" class="a td" style="left:1594.9px;top:266.2px;letter-spacing:-0.49px">6.00</div>
<div id="t125" class="a td" style="left:1645.3px;top:266.2px;letter-spacing:-0.65px">34.1</div>
<div id="t126" class="a td" style="left:1722.6px;top:266.2px;transform:scaleX(0.893);transform-origin:0 0">0.7</div>
<div id="t127" class="a td" style="left:1799.9px;top:266.2px;letter-spacing:0.29px">Rigid</div>
<div id="t128" class="a" style="left:1060px;top:485px;width:859px;height:6px;background:#cbcbcb;border-top:1px solid #bcbcbc"></div>



<!-- 3D MODEL -->
<svg class="a" style="left:0;top:0" width="1055" height="998" viewBox="0 0 1055 998">
<defs>
<filter id="blur4" x="-20%" y="-50%" width="140%" height="200%"><feGaussianBlur stdDeviation="4"/></filter>
<filter id="blur6" x="-20%" y="-50%" width="140%" height="200%"><feGaussianBlur stdDeviation="6"/></filter>
<linearGradient id="shg" x1="0" y1="0" x2="1" y2="0"><stop offset="0" stop-color="#c9c9c9"/><stop offset="0.6" stop-color="#cfcfcf"/><stop offset="1" stop-color="#e8e8e8"/></linearGradient>
<linearGradient id="bwebg" gradientUnits="userSpaceOnUse" x1="0" y1="325" x2="0" y2="520"><stop offset="0" stop-color="#6c9f1c"/><stop offset="0.25" stop-color="#79b621"/><stop offset="0.85" stop-color="#7dbd22"/><stop offset="1" stop-color="#6fa81e"/></linearGradient>
<linearGradient id="weldg" x1="0" y1="0" x2="1" y2="0"><stop offset="0" stop-color="#d07810"/><stop offset="0.15" stop-color="#7a4404"/><stop offset="0.8" stop-color="#6a3a04"/><stop offset="1" stop-color="#e08a18"/></linearGradient>
<linearGradient id="webg" x1="0" y1="0" x2="1" y2="0"><stop offset="0" stop-color="#6a9c1b"/><stop offset="0.1" stop-color="#7cba21"/><stop offset="1" stop-color="#7fbf22"/></linearGradient>
<linearGradient id="lwebg" x1="0" y1="0" x2="1" y2="0"><stop offset="0" stop-color="#a2a2a2"/><stop offset="1" stop-color="#9a9a9a"/></linearGradient>
</defs>
<!-- shadow -->
<polygon points="226,944 284,904 497,906 600,940 700,973 775,998 450,998 300,965" fill="url(#shg)" filter="url(#blur6)"/>
<!-- back gray top plate -->
<polygon points="305,244 341.5,223 470,238 470,300 305,300" fill="#afafaf"/>
<!-- column left flange inner dark -->
<polygon points="235.3,290.2 335.6,204.4 336,218 283,262 283,902 236.4,942" fill="#4a4a4a"/>
<polygon points="297,249 305,254 341.5,224 335,216" fill="#777"/>
<!-- column web -->
<polygon points="282.6,251 450,265 450,340 385,340 385,931 283,901.7" fill="url(#webg)"/>
<!-- green top bar -->
<polygon points="276.1,247.1 278.6,244 450,259 450,265.5 282.7,250.7" fill="#8ad62c"/>
<!-- light strip -->
<polygon points="295.4,263.4 430,277 430,288 294.4,273.6" fill="#cecece"/>
<!-- top stiffener -->
<polygon points="236.9,303.1 281.2,274.6 430,289 430,305 383,326.5 236.9,310.2" fill="#adadad"/>
<polygon points="236.9,302.6 275,270 280.6,275.6 242.5,309.7" fill="#6e6e6e"/>
<polygon points="236.9,310.7 384,326.5 384,334.6 236.9,318.4" fill="#a6a6a6"/>
<line x1="232" y1="310.5" x2="384" y2="326.5" stroke="#dcdcdc" stroke-width="0.8"/>
<!-- lower stiffener -->
<polygon points="236.6,655 275.3,620.7 297,616.5 384,640 384,699.4 236.7,662.2" fill="#afafaf"/>
<polygon points="297.2,616.3 384,640.1 384,651.7 294.3,627.3" fill="#e4e4e4"/>
<polygon points="236.7,652.9 275.1,619.2 281.5,627.9 242,661" fill="#6e6e6e"/>
<polygon points="236.7,662.2 384,699.4 384,708.7 236.7,671" fill="#a3a3a3"/>
<line x1="232" y1="661.5" x2="384" y2="700" stroke="#dcdcdc" stroke-width="0.8"/>
<!-- column left flange top + front -->
<polygon points="223,286.6 322.6,200.8 335.6,204.4 235.3,290.2" fill="#acacac"/>
<polygon points="223,286.6 235.3,290.2 236.4,942 222.4,939" fill="#a4a4a4"/>
<!-- column right flange -->
<polygon points="396.2,309.5 496,222.3 495.3,901.7 396,988.5" fill="#3e5c14"/>
<polygon points="382.6,305.6 483.4,218.4 496,222.3 396.2,309.5" fill="#8ad42c"/>
<polygon points="382.6,305.6 396.2,309.5 396,988.5 382,985.4" fill="#82c626"/>
<!-- end plate -->
<polygon points="412.6,301.5 480.5,243.6 489.2,246.5 422.3,306" fill="#86ca2a"/>
<polygon points="424.3,308.5 490.2,250.4 495,256.2 426.2,314.3" fill="#6aa020"/>
<polygon points="422.9,309 494,254 495,300 423,345" fill="#3e5c14"/>
<polygon points="412.6,302.2 422.9,309 423.3,761.2 412.2,759" fill="#84c828"/>

<!-- beam top flange -->
<polygon points="421.8,314.8 496.3,257.5 774.7,288.5 708,346.2" fill="#8cd52c"/>
<polygon points="421.8,314.8 708,346.2 710.5,354.9 421.8,321.7" fill="#77b81f"/>
<polygon points="708,346.2 774.7,288.5 776,297.5 710.5,354.9" fill="#3f5e14"/>
<!-- beam web -->
<polygon points="459.6,322 710.5,355 741.5,321.7 779.8,548.5 458.3,512" fill="url(#bwebg)"/>
<line x1="741.5" y1="321.7" x2="779.8" y2="548.5" stroke="#4f7e14" stroke-width="2"/>
<polygon points="450.4,324 459.6,324 459.6,512 450.4,512" fill="url(#weldg)"/>
<!-- middle gray flange -->
<polygon points="423,539 458.3,512 779.8,548.5 777,514.6 812.4,518.7 747.8,575.6" fill="#b2b2b2"/>
<polygon points="423,539 747.8,575.6 748,586 423,547.2" fill="#c2c2c2"/>
<polygon points="747.8,575.6 813,519 814.4,527.5 748,586" fill="#5c5c5c"/>
<!-- lower green flange top (behind web) -->
<polygon points="423,693.7 454.3,665.2 831.4,624.5 766.2,680.1" fill="#88ce2a"/>
<!-- lower gray web -->
<polygon points="450.2,548 748.6,586.5 781.4,557.5 798.8,654.3 454.3,667.5" fill="url(#lwebg)"/>
<polygon points="458,658.5 797.5,647 798.8,655 454.3,667.5" fill="#c4c4c4"/>
<polygon points="450.2,548 461,550 461,665 450.2,668" fill="#5e5e5e"/>
<line x1="779.8" y1="548.5" x2="798.8" y2="654.3" stroke="#6a6a6a" stroke-width="1.5"/>
<!-- lower green flange -->
<polygon points="423,693.7 766.2,680.1 766.2,688.2 423,701.8" fill="#7abd22"/>
<polygon points="765.5,681 831.6,624.2 833,632 765.5,689" fill="#3f5e14"/>
<polygon points="423,689.6 454,665 459,668 427,695" fill="#c46c0e"/>


<!-- edge highlights -->
<g stroke="#9fe83c" stroke-width="0.9" fill="none">
 <path d="M382.6,305.6 L382,985.4 M396.2,309.5 L396,988.5 L495.3,901.7 L495.5,702"/>
 <path d="M283,901.7 L382,929.6"/>
 <path d="M412.6,302.2 L412.2,759 M423.3,761.2 L489,701.7"/>
 <path d="M421.8,314.8 L708,346.2 L774.7,288.5 M421.8,321.7 L710.5,354.9 L776,297.5"/>
 <path d="M423,693.7 L766.2,680.1 L831.4,624.5 M423,701.8 L766.2,688.2"/>
 <path d="M278.6,244 L436,257.8"/>
</g>
<!-- bolts -->
<path d="M443,327 Q430,330 431.5,344 Q433,359 444,360 L446,358 L446,330 Z" fill="#6a9a22" stroke="#9ad63e" stroke-width="0.7"/>
<polygon points="439.4,329.7 451,332.6 449,344.2 436.5,342.8" fill="#86b634" stroke="#9ad63e" stroke-width="0.5"/>
<polygon points="436.5,342.8 449,344.2 447.1,357.8 436.5,356.8" fill="#6e9a28" stroke="#9ad63e" stroke-width="0.5"/>
<polygon points="449,332.6 457.8,334.5 457.8,352.0 452,358.8 446.2,357.8 449,344.2" fill="#3a5010"/>
<path d="M443,375.5 Q430,378.5 431.5,392.5 Q433,407.5 444,408.5 L446,406.5 L446,378.5 Z" fill="#6a9a22" stroke="#9ad63e" stroke-width="0.7"/>
<polygon points="439.4,378.2 451,381.1 449,392.7 436.5,391.3" fill="#86b634" stroke="#9ad63e" stroke-width="0.5"/>
<polygon points="436.5,391.3 449,392.7 447.1,406.3 436.5,405.3" fill="#6e9a28" stroke="#9ad63e" stroke-width="0.5"/>
<polygon points="449,381.1 457.8,383.0 457.8,400.5 452,407.3 446.2,406.3 449,392.7" fill="#3a5010"/>
<!-- arrow shadow -->
<g filter="url(#blur4)" opacity="0.35">
 <path d="M452,352 L560,385 M452,400 L550,430" stroke="#2d4a08" stroke-width="9"/>
 <circle cx="568" cy="386" r="12" fill="#2d4a08"/><circle cx="557" cy="430" r="12" fill="#2d4a08"/>
</g>
<!-- arrows -->
<path d="M449.3,345.7 L552,376.5" stroke="#5d8f18" stroke-width="5" stroke-linecap="round"/>
<path d="M449.3,345.7 L552,376.5" stroke="#8ed530" stroke-width="2.8" stroke-linecap="round"/>
<polygon points="548.5,367.5 576.5,382.4 548,386" fill="#8ad02c" stroke="#5d8f18" stroke-width="0.8"/>
<ellipse cx="549" cy="376.8" rx="3" ry="9.2" fill="#79b824"/>
<path d="M449.3,393.9 L542,422.5" stroke="#5d8f18" stroke-width="5" stroke-linecap="round"/>
<path d="M449.3,393.9 L542,422.5" stroke="#8ed530" stroke-width="2.8" stroke-linecap="round"/>
<polygon points="539.5,413.3 566,426 539.5,431" fill="#8ad02c" stroke="#5d8f18" stroke-width="0.8"/>
<ellipse cx="540" cy="422.2" rx="3" ry="9" fill="#79b824"/>
<!-- labels -->
<rect x="622.8" y="381.3" width="45.8" height="14.2" fill="#8c9c64"/>
<text x="624" y="392" font-family="Liberation Sans" font-size="11" fill="#1a1a1a">B2: 80.6</text>
<rect x="607.4" y="424.8" width="45.8" height="14.9" fill="#8c9c64"/>
<text x="608.5" y="435.8" font-family="Liberation Sans" font-size="11" fill="#1a1a1a">B4: 74.3</text>
<!-- lower bolt -->
<path d="M443,703.5 Q430,706.5 431.5,720.5 Q433,735.5 444,736.5 L446,734.5 L446,706.5 Z" fill="#8a8a8a" stroke="#cfcfcf" stroke-width="0.7"/>
<polygon points="439.4,706.2 451.0,709.1 449.0,720.7 436.5,719.3" fill="#a9a9a9" stroke="#dcdcdc" stroke-width="0.5"/>
<polygon points="436.5,719.3 449.0,720.7 447.1,734.3 436.5,733.3" fill="#9c9c9c" stroke="#dcdcdc" stroke-width="0.5"/>
<polygon points="449.0,709.1 457.8,711.0 457.8,728.5 452.0,735.3 446.2,734.3 449.0,720.7" fill="#5a5a5a" stroke="#cfcfcf" stroke-width="0.5"/>
<polygon points="466,702.5 487,701.5 487,704.5 468,705.5" fill="#8f8f8f" stroke="#cfcfcf" stroke-width="0.5"/>
<!-- nav cube -->
<ellipse cx="999.6" cy="263" rx="34" ry="17" fill="none" stroke="#dedede" stroke-width="7.5"/>
<polygon points="993.8,222 1023.6,228.2 1021.3,257.2 1006.6,275.9 976.3,263.8 973.2,233.6" fill="#adadad" stroke="#8a8a8a" stroke-width="1"/>
<path d="M973.2,233.6 L1006.9,241.7 L1023.6,228.2 M1006.9,241.7 L1006.6,275.9 M993.8,222 L994.5,249.1 L976.3,263.8 M994.5,249.1 L1021.3,257.2" stroke="#8a8a8a" stroke-width="1" fill="none"/>
<path d="M971.5,286 L978,278 L984.5,275.5 M978,278 L976,274" stroke="#777" stroke-width="2.2" fill="none"/>
<path d="M965,250.6 L972,251 M1028,269.5 L1039,273" stroke="#888" stroke-width="1" fill="none"/>
<text x="988" y="257" font-family="Liberation Sans" font-size="8" fill="#fff">+Y</text>
</svg>

<svg class="a" style="left:1060px;top:491px" width="859" height="507" viewBox="1060 491 859 507">
<text x="1333.5" y="515.5" text-anchor="middle" font-family="Liberation Sans" font-size="15" fill="#444">Stiffness diagram My - &#981;y, LE1</text>
<line x1="1211.5" y1="543.5" x2="1211.5" y2="954.2" stroke="#e4e4e4" stroke-width="1"/>
<line x1="1306.5" y1="543.5" x2="1306.5" y2="954.2" stroke="#e4e4e4" stroke-width="1"/>
<line x1="1401.5" y1="543.5" x2="1401.5" y2="954.2" stroke="#e4e4e4" stroke-width="1"/>
<line x1="1496.5" y1="543.5" x2="1496.5" y2="954.2" stroke="#e4e4e4" stroke-width="1"/>
<line x1="1591.5" y1="543.5" x2="1591.5" y2="954.2" stroke="#e4e4e4" stroke-width="1"/>
<line x1="1111.5" y1="875.2" x2="1590.5" y2="875.2" stroke="#e4e4e4" stroke-width="1"/>
<line x1="1111.5" y1="875.2" x2="1116.5" y2="875.2" stroke="#aaa" stroke-width="1"/>
<text x="1110.5" y="879.5" text-anchor="end" font-family="Liberation Sans" font-size="12" fill="#555" letter-spacing="-0.3">50.0</text>
<line x1="1111.5" y1="796.2" x2="1590.5" y2="796.2" stroke="#e4e4e4" stroke-width="1"/>
<line x1="1111.5" y1="796.2" x2="1116.5" y2="796.2" stroke="#aaa" stroke-width="1"/>
<text x="1110.5" y="800.5" text-anchor="end" font-family="Liberation Sans" font-size="12" fill="#555" letter-spacing="-0.3">100.0</text>
<line x1="1111.5" y1="717.3" x2="1590.5" y2="717.3" stroke="#e4e4e4" stroke-width="1"/>
<line x1="1111.5" y1="717.3" x2="1116.5" y2="717.3" stroke="#aaa" stroke-width="1"/>
<text x="1110.5" y="721.6" text-anchor="end" font-family="Liberation Sans" font-size="12" fill="#555" letter-spacing="-0.3">150.0</text>
<line x1="1111.5" y1="638.3" x2="1590.5" y2="638.3" stroke="#e4e4e4" stroke-width="1"/>
<line x1="1111.5" y1="638.3" x2="1116.5" y2="638.3" stroke="#aaa" stroke-width="1"/>
<text x="1110.5" y="642.6" text-anchor="end" font-family="Liberation Sans" font-size="12" fill="#555" letter-spacing="-0.3">200.0</text>
<line x1="1111.5" y1="559.3" x2="1590.5" y2="559.3" stroke="#e4e4e4" stroke-width="1"/>
<line x1="1111.5" y1="559.3" x2="1116.5" y2="559.3" stroke="#aaa" stroke-width="1"/>
<text x="1110.5" y="563.6" text-anchor="end" font-family="Liberation Sans" font-size="12" fill="#555" letter-spacing="-0.3">250.0</text>
<text x="1110.5" y="958.5" text-anchor="end" font-family="Liberation Sans" font-size="12" fill="#555" letter-spacing="-0.3">0.0</text>
<line x1="1116.5" y1="954.2" x2="1116.5" y2="959.2" stroke="#aaa" stroke-width="1"/>
<text x="1116.5" y="971.5" text-anchor="middle" font-family="Liberation Sans" font-size="12" fill="#555" letter-spacing="-0.3">0.0</text>
<line x1="1211.5" y1="954.2" x2="1211.5" y2="959.2" stroke="#aaa" stroke-width="1"/>
<text x="1211.5" y="971.5" text-anchor="middle" font-family="Liberation Sans" font-size="12" fill="#555" letter-spacing="-0.3">10.0</text>
<line x1="1306.5" y1="954.2" x2="1306.5" y2="959.2" stroke="#aaa" stroke-width="1"/>
<text x="1306.5" y="971.5" text-anchor="middle" font-family="Liberation Sans" font-size="12" fill="#555" letter-spacing="-0.3">20.0</text>
<line x1="1401.5" y1="954.2" x2="1401.5" y2="959.2" stroke="#aaa" stroke-width="1"/>
<text x="1401.5" y="971.5" text-anchor="middle" font-family="Liberation Sans" font-size="12" fill="#555" letter-spacing="-0.3">30.0</text>
<line x1="1496.5" y1="954.2" x2="1496.5" y2="959.2" stroke="#aaa" stroke-width="1"/>
<text x="1496.5" y="971.5" text-anchor="middle" font-family="Liberation Sans" font-size="12" fill="#555" letter-spacing="-0.3">40.0</text>
<line x1="1591.5" y1="954.2" x2="1591.5" y2="959.2" stroke="#aaa" stroke-width="1"/>
<text x="1591.5" y="971.5" text-anchor="middle" font-family="Liberation Sans" font-size="12" fill="#555" letter-spacing="-0.3">50.0</text>
<line x1="1116.5" y1="543.5" x2="1116.5" y2="954.2" stroke="#b4b4b4" stroke-width="1.3"/>
<line x1="1116.5" y1="954.2" x2="1590.5" y2="954.2" stroke="#b4b4b4" stroke-width="1.6"/>
<line x1="1116.5" y1="749.0" x2="1590.5" y2="749.0" stroke="#b9d1ea" stroke-width="1.5"/>
<line x1="1116.5" y1="793.9" x2="1590.5" y2="793.9" stroke="#b9d1ea" stroke-width="1.5"/>
<line x1="1116.5" y1="812.0" x2="1590.5" y2="812.0" stroke="#b9d1ea" stroke-width="1.5"/>
<line x1="1116.5" y1="847.3" x2="1590.5" y2="847.3" stroke="#b9d1ea" stroke-width="1.5"/>
<text x="1116.5" y="745.5" font-family="Liberation Sans" font-size="12" fill="#555" letter-spacing="-0.3">Mc,Rd = 129.9 kNm</text>
<text x="1590.5" y="789.5" text-anchor="end" font-family="Liberation Sans" font-size="12" fill="#555" letter-spacing="-0.3">Mj,Rd = 101.5 kNm</text>
<text x="1116.5" y="825.5" font-family="Liberation Sans" font-size="12" fill="#555" letter-spacing="-0.3">MEd = 90.0 kNm</text>
<text x="1590.5" y="861" text-anchor="end" font-family="Liberation Sans" font-size="12" fill="#555" letter-spacing="-0.3">2/3 Mj,Rd = 67.7 kNm</text>
<line x1="1116.5" y1="954.2" x2="1525.0" y2="907.6" stroke="#3a3aff" stroke-width="1.2"/>
<line x1="1116.5" y1="954.2" x2="1141.4" y2="811.5" stroke="#f5a623" stroke-width="1.3"/>
<line x1="1116.5" y1="954.2" x2="1116.5" y2="810" stroke="#2f7f2f" stroke-width="1.2"/>
<path d="M1116.7,810.7 Q1118,803 1125.4,802 L1145.4,796.7 Q1175,791.5 1211.7,788.9 Q1240,786.5 1260,784.9 Q1400,778 1524.5,775.3" fill="none" stroke="#0b640b" stroke-width="2.6"/>
<circle cx="1116.7" cy="846.8" r="2.6" fill="#fff" stroke="#b5db7a" stroke-width="1.2"/>
<path d="M1113.5,861.6 L1120,861.6 L1116.5,852.5 Z" fill="#c2e18c"/>
<rect x="1113.5" y="861.6" width="103.1" height="22" fill="#c2e18c" opacity="0.92"/>
<line x1="1116.5" y1="954.2" x2="1141.4" y2="811.5" stroke="#f5a623" stroke-width="1.3" opacity="0.55"/>
<text x="1116.7" y="877.5" font-family="Liberation Sans" font-size="12" fill="#444" letter-spacing="-0.4">Sj,ini = &#8734; MNm/rad</text>
<text x="1080" y="749.6" transform="rotate(-90 1080 749.6)" text-anchor="middle" font-family="Liberation Sans" font-size="12" fill="#555" letter-spacing="-0.3">M[kNm]</text>
<text x="1353.5" y="988" text-anchor="middle" font-family="Liberation Sans" font-size="12" fill="#555" letter-spacing="-0.3">&#981;[mrad]</text>
<rect x="1620.5" y="540.2" width="8.3" height="8.3" fill="#006400"/>
<text x="1633.5" y="548.5" font-family="Liberation Sans" font-size="11" fill="#555" letter-spacing="-0.3">Sj</text>
<rect x="1620.5" y="556.5" width="8.3" height="8.3" fill="#ffa500"/>
<text x="1633.5" y="564.8" font-family="Liberation Sans" font-size="11" fill="#555" letter-spacing="-0.3">Sj,R</text>
<rect x="1620.5" y="572.8" width="8.3" height="8.3" fill="#0000ff"/>
<text x="1633.5" y="581.1" font-family="Liberation Sans" font-size="11" fill="#555" letter-spacing="-0.3">Sj,P</text>
<rect x="1620.5" y="589.1" width="8.3" height="8.3" fill="#006400"/>
<text x="1633.5" y="597.4" font-family="Liberation Sans" font-size="11" fill="#555" letter-spacing="-0.3">Sj,ini</text>
</svg>
<!-- FOOTER -->
<svg class="a" style="left:0;top:999px" width="1920" height="33"><defs><filter id="sf2" filterUnits="userSpaceOnUse" x="-300" y="-10" width="2520" height="53"><feGaussianBlur stdDeviation="16 0.6"/></filter></defs><rect width="1920" height="33" fill="#0f0f0f"/><g filter="url(#sf2)"><rect x="-300" y="0" width="2520" height="2" fill="#fff" opacity="0.007"/><rect x="-300" y="4" width="2520" height="2" fill="#fff" opacity="0.030"/><rect x="-300" y="6" width="2520" height="2" fill="#000" opacity="0.441"/><rect x="-300" y="10" width="2520" height="2" fill="#fff" opacity="0.027"/><rect x="-300" y="14" width="2520" height="2" fill="#fff" opacity="0.043"/><rect x="-300" y="16" width="2520" height="2" fill="#000" opacity="0.248"/><rect x="-300" y="18" width="2520" height="2" fill="#fff" opacity="0.025"/><rect x="-300" y="20" width="2520" height="2" fill="#000" opacity="0.438"/><rect x="-300" y="24" width="2520" height="2" fill="#000" opacity="0.203"/><rect x="-300" y="26" width="2520" height="2" fill="#000" opacity="0.218"/><rect x="-300" y="32" width="2520" height="2" fill="#fff" opacity="0.033"/><rect x="1198" y="14.1" width="304" height="2" fill="#fff" opacity="0.067"/><rect x="-51" y="19.3" width="195" height="1" fill="#fff" opacity="0.061"/><rect x="1516" y="18.0" width="271" height="1" fill="#fff" opacity="0.068"/><rect x="251" y="22.0" width="377" height="2" fill="#fff" opacity="0.045"/><rect x="406" y="23.8" width="887" height="2" fill="#fff" opacity="0.043"/><rect x="266" y="31.8" width="569" height="1.5" fill="#fff" opacity="0.026"/><rect x="81" y="28.9" width="399" height="1.5" fill="#fff" opacity="0.063"/><rect x="-131" y="5.9" width="354" height="2" fill="#fff" opacity="0.028"/><rect x="1387" y="22.3" width="734" height="1.5" fill="#fff" opacity="0.057"/><rect x="-248" y="26.2" width="248" height="1.5" fill="#fff" opacity="0.035"/><rect x="1516" y="30.4" width="158" height="2" fill="#fff" opacity="0.061"/><rect x="61" y="10.0" width="680" height="2" fill="#fff" opacity="0.022"/><rect x="1402" y="5.0" width="345" height="1" fill="#fff" opacity="0.048"/><rect x="525" y="21.1" width="163" height="2" fill="#fff" opacity="0.073"/><rect x="1313" y="9.0" width="381" height="2" fill="#fff" opacity="0.033"/><rect x="1538" y="5.2" width="824" height="1.5" fill="#fff" opacity="0.024"/><rect x="64" y="3.5" width="348" height="1.5" fill="#fff" opacity="0.075"/><rect x="972" y="20.9" width="743" height="1.5" fill="#fff" opacity="0.055"/><rect x="1369" y="22.4" width="615" height="1.5" fill="#fff" opacity="0.028"/><rect x="1133" y="26.9" width="677" height="2" fill="#fff" opacity="0.088"/><rect x="1761" y="21.0" width="423" height="1" fill="#fff" opacity="0.064"/><rect x="1264" y="26.7" width="849" height="1" fill="#fff" opacity="0.050"/><rect x="-210" y="16.7" width="666" height="1.5" fill="#fff" opacity="0.083"/><rect x="849" y="10.1" width="665" height="1" fill="#fff" opacity="0.055"/><rect x="440" y="1.6" width="509" height="2" fill="#fff" opacity="0.066"/><rect x="455" y="21.2" width="692" height="1" fill="#fff" opacity="0.048"/><rect x="157" y="13.6" width="845" height="2" fill="#fff" opacity="0.042"/><rect x="1322" y="29.0" width="751" height="1.5" fill="#fff" opacity="0.065"/><rect x="1502" y="21.6" width="648" height="1.5" fill="#fff" opacity="0.066"/><rect x="802" y="29.6" width="170" height="2" fill="#fff" opacity="0.086"/><rect x="1789" y="21.5" width="629" height="1.5" fill="#fff" opacity="0.058"/><rect x="1269" y="24.7" width="204" height="1" fill="#fff" opacity="0.064"/><rect x="1899" y="25.2" width="742" height="1.5" fill="#fff" opacity="0.060"/><rect x="1481" y="14.6" width="458" height="1.5" fill="#fff" opacity="0.083"/><rect x="-169" y="2.5" width="180" height="1.5" fill="#fff" opacity="0.058"/><rect x="423" y="5.6" width="734" height="2" fill="#fff" opacity="0.089"/><rect x="1913" y="27.9" width="786" height="1.5" fill="#fff" opacity="0.028"/><rect x="1668" y="9.8" width="547" height="1.5" fill="#fff" opacity="0.057"/><rect x="1591" y="20.1" width="393" height="1" fill="#fff" opacity="0.051"/><rect x="1918" y="28.5" width="220" height="2" fill="#fff" opacity="0.066"/><rect x="1660" y="13.1" width="453" height="1.5" fill="#fff" opacity="0.059"/><rect x="1142" y="12.9" width="798" height="1.5" fill="#fff" opacity="0.066"/><rect x="672" y="14.1" width="831" height="1" fill="#fff" opacity="0.038"/><rect x="-280" y="14.0" width="231" height="1.5" fill="#fff" opacity="0.020"/><rect x="536" y="23.8" width="228" height="1" fill="#fff" opacity="0.079"/><rect x="181" y="3.9" width="416" height="2" fill="#fff" opacity="0.042"/><rect x="1376" y="3.7" width="689" height="1.5" fill="#fff" opacity="0.078"/><rect x="1698" y="29.4" width="274" height="1.5" fill="#fff" opacity="0.084"/><rect x="-82" y="14.8" width="361" height="2" fill="#fff" opacity="0.063"/><rect x="-39" y="30.2" width="875" height="2" fill="#fff" opacity="0.041"/><rect x="550" y="20.9" width="696" height="1.5" fill="#fff" opacity="0.066"/><rect x="1174" y="4.5" width="470" height="2" fill="#fff" opacity="0.080"/><rect x="153" y="30.2" width="185" height="1.5" fill="#fff" opacity="0.027"/><rect x="1844" y="13.0" width="542" height="1.5" fill="#fff" opacity="0.087"/><rect x="-235" y="3.8" width="818" height="2" fill="#fff" opacity="0.064"/><rect x="-178" y="20.7" width="882" height="2" fill="#fff" opacity="0.025"/><rect x="1013" y="25.5" width="243" height="2" fill="#fff" opacity="0.022"/><rect x="1087" y="4.4" width="439" height="1" fill="#fff" opacity="0.055"/><rect x="1900" y="6.4" width="388" height="2" fill="#fff" opacity="0.030"/><rect x="206" y="16.1" width="153" height="1" fill="#fff" opacity="0.071"/><rect x="373" y="5.2" width="614" height="2" fill="#fff" opacity="0.051"/><rect x="-82" y="31.4" width="742" height="2" fill="#fff" opacity="0.049"/><rect x="13" y="8.6" width="338" height="1" fill="#fff" opacity="0.078"/><rect x="623" y="26.8" width="211" height="2" fill="#fff" opacity="0.076"/><rect x="-212" y="14.4" width="654" height="1" fill="#fff" opacity="0.055"/><rect x="1640" y="25.8" width="574" height="2" fill="#fff" opacity="0.024"/><rect x="-169" y="19.1" width="405" height="2" fill="#fff" opacity="0.037"/><rect x="1880" y="1.9" width="160" height="2" fill="#fff" opacity="0.037"/><rect x="1672" y="18.0" width="881" height="1.5" fill="#fff" opacity="0.084"/><rect x="-32" y="21.7" width="292" height="1.5" fill="#fff" opacity="0.034"/><rect x="222" y="26.6" width="544" height="1" fill="#fff" opacity="0.063"/><rect x="887" y="1.1" width="361" height="2" fill="#fff" opacity="0.021"/><rect x="639" y="22.7" width="161" height="2" fill="#fff" opacity="0.058"/><rect x="299" y="23.6" width="692" height="1.5" fill="#fff" opacity="0.054"/><rect x="-271" y="3.1" width="230" height="2" fill="#fff" opacity="0.050"/><rect x="1740" y="24.0" width="314" height="1" fill="#fff" opacity="0.041"/><rect x="1442" y="30.7" width="293" height="1" fill="#fff" opacity="0.045"/><rect x="1524" y="5.3" width="592" height="1" fill="#fff" opacity="0.068"/><rect x="87" y="21.8" width="831" height="1.5" fill="#fff" opacity="0.049"/><rect x="-20" y="31.4" width="897" height="2" fill="#fff" opacity="0.080"/><rect x="1103" y="2.3" width="393" height="1" fill="#fff" opacity="0.059"/><rect x="1049" y="4.7" width="253" height="1.5" fill="#fff" opacity="0.024"/><rect x="569" y="15.5" width="282" height="1" fill="#fff" opacity="0.025"/><rect x="413" y="1.9" width="591" height="2" fill="#fff" opacity="0.083"/><rect x="608" y="5.7" width="716" height="1" fill="#fff" opacity="0.039"/><rect x="1748" y="12.9" width="874" height="1" fill="#fff" opacity="0.055"/><rect x="1894" y="25.2" width="652" height="1" fill="#fff" opacity="0.066"/><rect x="1266" y="14.0" width="235" height="1" fill="#fff" opacity="0.049"/><rect x="280" y="23.9" width="308" height="1" fill="#fff" opacity="0.026"/><rect x="-167" y="27.7" width="509" height="1.5" fill="#fff" opacity="0.059"/><rect x="1369" y="16.3" width="777" height="2" fill="#fff" opacity="0.034"/><rect x="-186" y="8.1" width="317" height="2" fill="#fff" opacity="0.046"/><rect x="1211" y="1.1" width="312" height="2" fill="#fff" opacity="0.042"/><rect x="312" y="16.1" width="419" height="2" fill="#fff" opacity="0.050"/><rect x="1662" y="5.7" width="594" height="1" fill="#fff" opacity="0.070"/><rect x="763" y="31.9" width="463" height="2" fill="#fff" opacity="0.085"/><rect x="1815" y="12.0" width="237" height="1.5" fill="#fff" opacity="0.070"/><rect x="-106" y="21.6" width="457" height="2" fill="#fff" opacity="0.033"/><rect x="1457" y="21.1" width="167" height="2" fill="#fff" opacity="0.080"/><rect x="1283" y="17.5" width="398" height="1.5" fill="#fff" opacity="0.047"/><rect x="1775" y="26.6" width="334" height="1.5" fill="#fff" opacity="0.060"/><rect x="845" y="17.5" width="750" height="1" fill="#fff" opacity="0.022"/><rect x="1326" y="31.8" width="690" height="1" fill="#fff" opacity="0.069"/><rect x="1500" y="9.8" width="734" height="1.5" fill="#fff" opacity="0.032"/><rect x="229" y="1.8" width="522" height="1.5" fill="#fff" opacity="0.088"/><rect x="501" y="18.1" width="619" height="1.5" fill="#fff" opacity="0.065"/><rect x="158" y="17.3" width="753" height="1.5" fill="#fff" opacity="0.058"/><rect x="1136" y="29.7" width="488" height="1.5" fill="#fff" opacity="0.076"/><rect x="752" y="16.9" width="749" height="1.5" fill="#fff" opacity="0.072"/><rect x="469" y="20.9" width="259" height="1" fill="#fff" opacity="0.073"/><rect x="711" y="14.0" width="542" height="2" fill="#fff" opacity="0.022"/><rect x="199" y="11.3" width="223" height="2" fill="#fff" opacity="0.082"/><rect x="1688" y="19.1" width="428" height="1.5" fill="#fff" opacity="0.071"/><rect x="470" y="9.4" width="727" height="1" fill="#fff" opacity="0.034"/><rect x="1808" y="26.1" width="814" height="2" fill="#fff" opacity="0.034"/><rect x="731" y="30.9" width="309" height="2" fill="#fff" opacity="0.062"/><rect x="1619" y="20.1" width="765" height="2" fill="#fff" opacity="0.082"/><rect x="955" y="14.9" width="263" height="1" fill="#fff" opacity="0.073"/><rect x="1428" y="16.1" width="185" height="1.5" fill="#fff" opacity="0.028"/><rect x="642" y="8.5" width="334" height="1.5" fill="#fff" opacity="0.041"/><rect x="1161" y="29.2" width="829" height="2" fill="#000" opacity="0.179"/><rect x="992" y="24.9" width="503" height="1" fill="#000" opacity="0.465"/><rect x="-260" y="16.2" width="820" height="2" fill="#000" opacity="0.264"/><rect x="-65" y="23.6" width="674" height="1" fill="#000" opacity="0.308"/><rect x="1699" y="15.4" width="572" height="2" fill="#000" opacity="0.253"/><rect x="834" y="21.0" width="541" height="2" fill="#000" opacity="0.418"/><rect x="97" y="28.6" width="430" height="2" fill="#000" opacity="0.353"/><rect x="1718" y="6.3" width="815" height="2" fill="#000" opacity="0.171"/><rect x="214" y="0.9" width="516" height="1" fill="#000" opacity="0.152"/><rect x="-111" y="17.8" width="372" height="2" fill="#000" opacity="0.409"/><rect x="940" y="9.5" width="234" height="1" fill="#000" opacity="0.142"/><rect x="617" y="31.0" width="626" height="1" fill="#000" opacity="0.250"/><rect x="1375" y="17.0" width="387" height="1" fill="#000" opacity="0.346"/><rect x="32" y="29.7" width="522" height="2" fill="#000" opacity="0.219"/><rect x="807" y="17.9" width="423" height="2" fill="#000" opacity="0.446"/><rect x="708" y="13.0" width="477" height="2" fill="#000" opacity="0.180"/><rect x="1799" y="3.4" width="379" height="1" fill="#000" opacity="0.142"/><rect x="1500" y="1.5" width="291" height="1" fill="#000" opacity="0.328"/><rect x="1084" y="0.3" width="304" height="1" fill="#000" opacity="0.214"/><rect x="635" y="28.3" width="624" height="1" fill="#000" opacity="0.319"/><rect x="363" y="23.9" width="276" height="2" fill="#000" opacity="0.128"/><rect x="-228" y="14.5" width="549" height="1" fill="#000" opacity="0.437"/><rect x="1286" y="30.4" width="658" height="2" fill="#000" opacity="0.116"/><rect x="1835" y="6.2" width="162" height="1" fill="#000" opacity="0.196"/><rect x="160" y="29.5" width="708" height="2" fill="#000" opacity="0.500"/><rect x="1447" y="24.1" width="537" height="1" fill="#000" opacity="0.176"/><rect x="1102" y="23.5" width="708" height="1" fill="#000" opacity="0.436"/><rect x="985" y="12.1" width="302" height="2" fill="#000" opacity="0.337"/><rect x="794" y="24.9" width="858" height="2" fill="#000" opacity="0.331"/><rect x="1843" y="9.7" width="808" height="2" fill="#000" opacity="0.103"/><rect x="-140" y="16.7" width="226" height="1" fill="#000" opacity="0.368"/><rect x="1358" y="20.6" width="428" height="2" fill="#000" opacity="0.290"/><rect x="-85" y="2.3" width="388" height="2" fill="#000" opacity="0.416"/><rect x="496" y="31.2" width="536" height="2" fill="#000" opacity="0.150"/><rect x="1194" y="14.2" width="319" height="2" fill="#000" opacity="0.167"/><rect x="280" y="11.1" width="202" height="1" fill="#000" opacity="0.293"/><rect x="751" y="28.1" width="688" height="1" fill="#000" opacity="0.458"/><rect x="153" y="16.3" width="402" height="2" fill="#000" opacity="0.161"/><rect x="153" y="2.1" width="474" height="2" fill="#000" opacity="0.208"/><rect x="1311" y="21.5" width="496" height="2" fill="#000" opacity="0.249"/><rect x="1796" y="14.9" width="295" height="1" fill="#000" opacity="0.113"/><rect x="786" y="7.8" width="845" height="1" fill="#000" opacity="0.115"/><rect x="827" y="31.2" width="884" height="2" fill="#000" opacity="0.370"/><rect x="-297" y="26.1" width="663" height="1" fill="#000" opacity="0.217"/><rect x="1895" y="9.4" width="313" height="2" fill="#000" opacity="0.129"/><rect x="1382" y="29.6" width="549" height="2" fill="#000" opacity="0.101"/><rect x="394" y="7.0" width="367" height="2" fill="#000" opacity="0.361"/><rect x="116" y="21.2" width="477" height="1" fill="#000" opacity="0.457"/><rect x="219" y="5.1" width="741" height="1" fill="#000" opacity="0.122"/><rect x="1681" y="18.6" width="445" height="1" fill="#000" opacity="0.472"/><rect x="802" y="25.6" width="237" height="1" fill="#000" opacity="0.360"/><rect x="1694" y="20.6" width="297" height="2" fill="#000" opacity="0.309"/><rect x="955" y="17.9" width="700" height="1" fill="#000" opacity="0.210"/><rect x="524" y="5.1" width="518" height="1" fill="#000" opacity="0.168"/><rect x="-162" y="31.8" width="520" height="2" fill="#000" opacity="0.235"/><rect x="298" y="9.9" width="294" height="2" fill="#000" opacity="0.133"/><rect x="1842" y="24.2" width="899" height="1" fill="#000" opacity="0.350"/><rect x="1465" y="29.5" width="464" height="2" fill="#000" opacity="0.144"/><rect x="1661" y="25.1" width="249" height="2" fill="#000" opacity="0.153"/><rect x="269" y="14.5" width="874" height="1" fill="#000" opacity="0.309"/><rect x="904" y="7.1" width="206" height="2" fill="#000" opacity="0.434"/><rect x="487" y="2.1" width="463" height="1" fill="#000" opacity="0.249"/><rect x="1863" y="22.9" width="214" height="1" fill="#000" opacity="0.413"/><rect x="448" y="1.6" width="321" height="1" fill="#000" opacity="0.358"/><rect x="-45" y="9.1" width="555" height="1" fill="#000" opacity="0.318"/><rect x="-110" y="2.5" width="325" height="1" fill="#000" opacity="0.179"/><rect x="207" y="28.6" width="899" height="2" fill="#000" opacity="0.317"/><rect x="1103" y="7.2" width="686" height="2" fill="#000" opacity="0.403"/><rect x="1495" y="10.5" width="756" height="2" fill="#000" opacity="0.184"/><rect x="1030" y="29.5" width="603" height="2" fill="#000" opacity="0.123"/><rect x="1497" y="19.2" width="886" height="2" fill="#000" opacity="0.265"/><rect x="-74" y="19.0" width="885" height="1" fill="#000" opacity="0.349"/><rect x="773" y="1.8" width="226" height="2" fill="#000" opacity="0.472"/><rect x="1721" y="31.2" width="165" height="1" fill="#000" opacity="0.440"/><rect x="270" y="31.8" width="362" height="1" fill="#000" opacity="0.290"/><rect x="188" y="6.5" width="714" height="2" fill="#000" opacity="0.273"/><rect x="1765" y="2.5" width="201" height="2" fill="#000" opacity="0.496"/><rect x="728" y="22.9" width="566" height="1" fill="#000" opacity="0.104"/><rect x="459" y="5.6" width="860" height="1" fill="#000" opacity="0.250"/><rect x="40" y="29.2" width="683" height="2" fill="#000" opacity="0.412"/></g></svg>
<div id="t130" class="a" style="left:24.0px;top:1010px;font-size:12.5px;font-weight:bold;color:#8a8a8a;white-space:nowrap;letter-spacing:-0.65px">Design code:</div>
<div id="t131" class="a" style="left:100.0px;top:1010px;font-weight:bold;color:#fff;font-size:12.5px;transform:scaleX(0.924);transform-origin:0 0">EN</div>
<div id="t132" class="a" style="left:135.8px;top:1010px;font-size:12.5px;font-weight:bold;color:#8a8a8a;letter-spacing:-0.76px">Analysis:</div>
<div id="t133" class="a" style="left:190.0px;top:1010px;font-size:12.5px;font-weight:bold;color:#fff;letter-spacing:-0.41px">Stiffness</div>
<div id="t134" class="a" style="left:259.0px;top:1010px;font-size:12.5px;font-weight:bold;color:#8a8a8a;letter-spacing:-0.57px">Units:</div>
<div id="t135" class="a" style="left:299.5px;top:1010px;font-size:12.5px;font-weight:bold;color:#fff;letter-spacing:0.57px">mm</div>
<div id="t136" class="a" style="left:1795.8px;top:1010px;font-size:12.5px;color:#e0e0e0;white-space:nowrap;letter-spacing:-0.22px"><span style="color:#e8731e">www.</span>ideastatica<span style="color:#e8731e">.com</span></div>

</body></html>
